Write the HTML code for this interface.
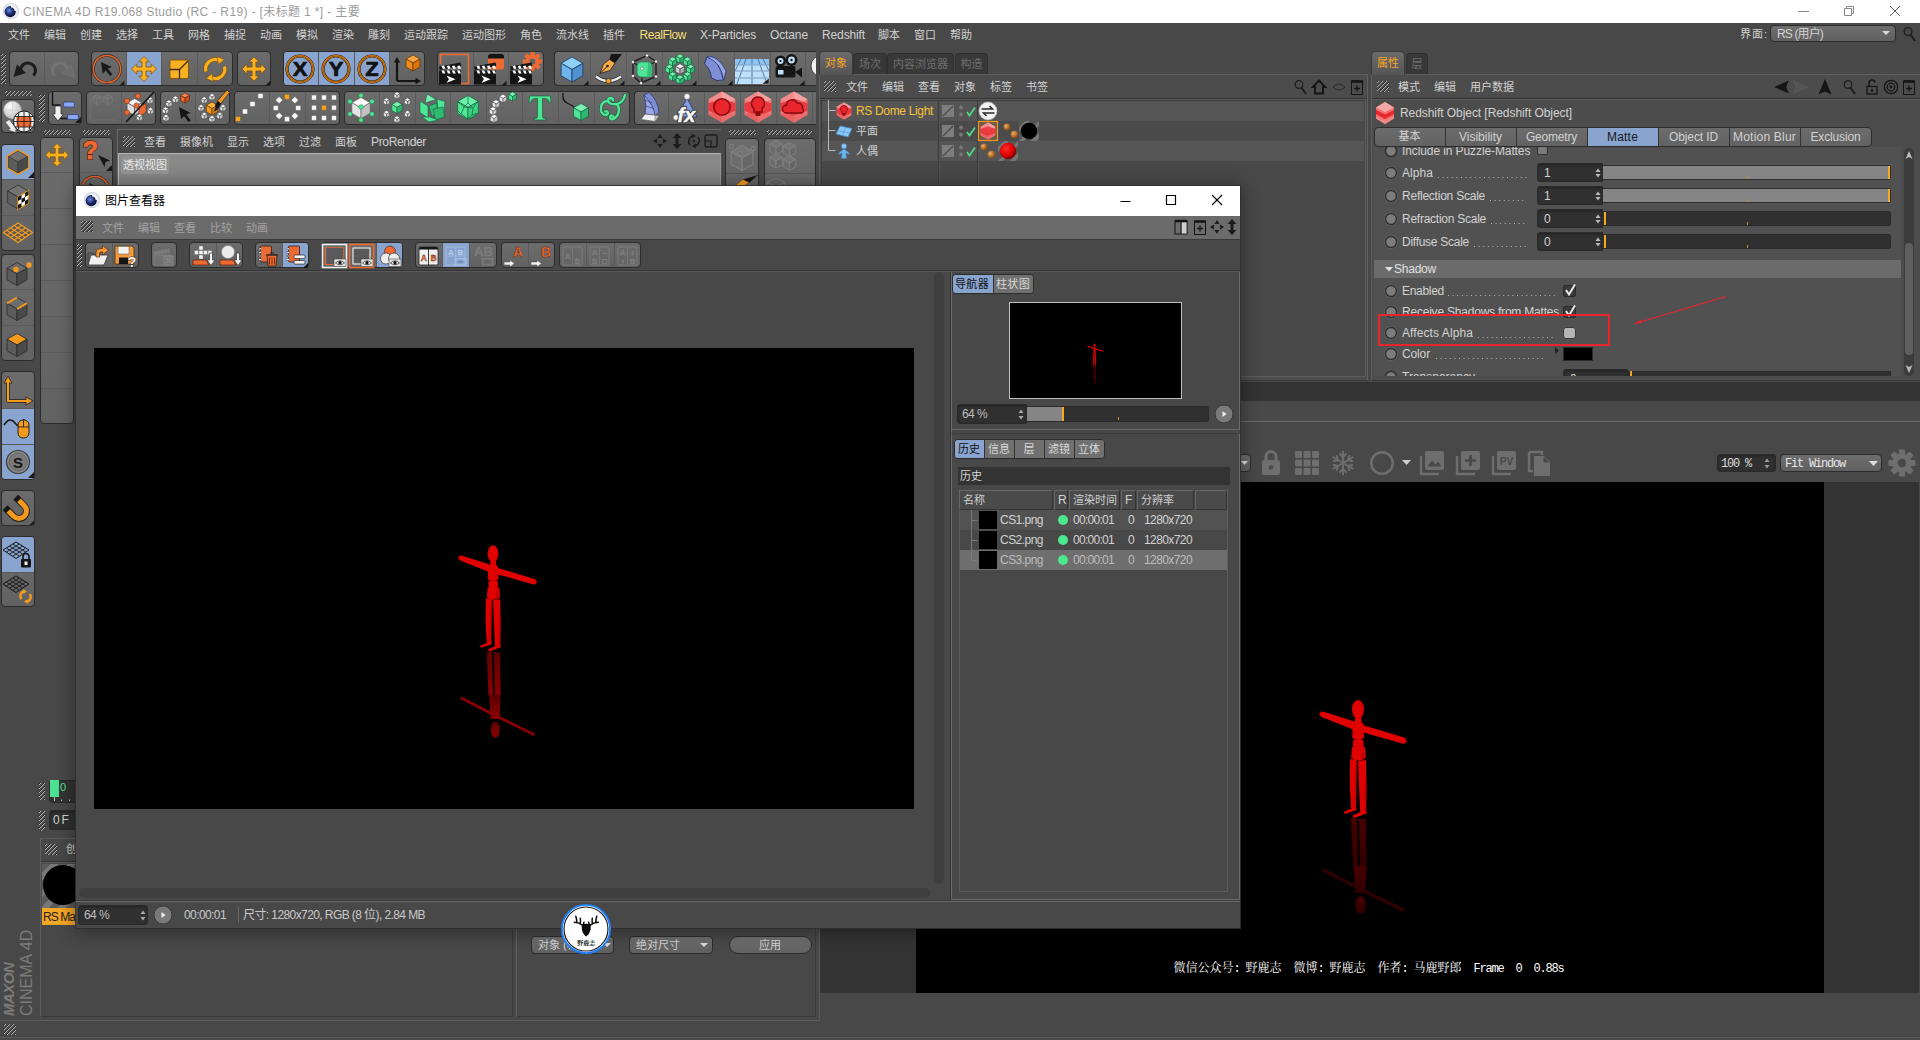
<!DOCTYPE html><html><head><meta charset="utf-8"><title>CINEMA 4D</title><style>
html,body{margin:0;padding:0}
body{width:1920px;height:1040px;overflow:hidden;background:#484848;position:relative;font-family:'Liberation Sans','Noto Sans CJK SC',sans-serif;font-size:12px}
div,span.t,svg{position:absolute;box-sizing:border-box}
span.t{white-space:pre}
svg{overflow:visible}
.grp{border:1px solid #2c2c2c;border-radius:4px;background:linear-gradient(#6c6c6c,#626262);overflow:hidden}
.btn{top:0;height:100%;border-left:1px solid #5a5a5a}
.sel{background:#88a4cf}
.hz{background:repeating-linear-gradient(135deg,#262626 0,#262626 1px,#b4b4b4 1px,#b4b4b4 2px,#505050 2px,#505050 2.83px)}
.fld{background:#303030;border:1px solid #2a2a2a;border-radius:3px;box-shadow:inset 0 1px 2px #222}
.dd{background:linear-gradient(#6e6e6e,#606060);border:1px solid #2c2c2c;border-radius:4px}
</style></head><body><div style="left:0px;top:0px;width:1920px;height:23px;background:#fff"></div>
<svg style="left:2px;top:2px;" width="18" height="18" viewBox="0 0 18 18"><defs><radialGradient id="lg" cx="40%" cy="40%" r="60%"><stop offset="0" stop-color="#6a8be0"/><stop offset="0.6" stop-color="#1b2a6b"/><stop offset="1" stop-color="#0a1030"/></radialGradient></defs><circle cx="9" cy="9" r="8" fill="#c9ccd6"/><circle cx="9" cy="9" r="7.3" fill="#e9ebf2"/><circle cx="8.2" cy="9.6" r="5.6" fill="url(#lg)"/><path d="M9 3.5a5.5 5.5 0 0 1 5.5 5.5l-2-.3a3.6 3.6 0 0 0-3.5-3.3z" fill="#f5f6fa"/></svg>
<span class="t" style="top:4.0px;font-size:12px;line-height:16px;color:#9b9b9b;left:23px;letter-spacing:0.364px;">CINEMA 4D R19.068 Studio (RC - R19) - [未标题 1 *] - 主要</span>
<svg style="left:1780px;top:0px;" width="140" height="23" viewBox="0 0 140 23"><path d="M18 11.5h11" stroke="#8a8a8a" stroke-width="1" fill="none"/><path d="M64.5 8.5h7v7h-7z M66.5 8.5v-2h7v7h-2" stroke="#8a8a8a" stroke-width="1" fill="none"/><path d="M110 6l10 10M120 6l-10 10" stroke="#666" stroke-width="1" fill="none"/></svg>
<span class="t" style="top:27.5px;font-size:11px;line-height:15px;color:#d2d2d2;left:8px;letter-spacing:0.000px;">文件</span>
<span class="t" style="top:27.5px;font-size:11px;line-height:15px;color:#d2d2d2;left:44px;letter-spacing:0.000px;">编辑</span>
<span class="t" style="top:27.5px;font-size:11px;line-height:15px;color:#d2d2d2;left:80px;letter-spacing:0.000px;">创建</span>
<span class="t" style="top:27.5px;font-size:11px;line-height:15px;color:#d2d2d2;left:116px;letter-spacing:0.000px;">选择</span>
<span class="t" style="top:27.5px;font-size:11px;line-height:15px;color:#d2d2d2;left:152px;letter-spacing:0.000px;">工具</span>
<span class="t" style="top:27.5px;font-size:11px;line-height:15px;color:#d2d2d2;left:188px;letter-spacing:0.000px;">网格</span>
<span class="t" style="top:27.5px;font-size:11px;line-height:15px;color:#d2d2d2;left:224px;letter-spacing:0.000px;">捕捉</span>
<span class="t" style="top:27.5px;font-size:11px;line-height:15px;color:#d2d2d2;left:260px;letter-spacing:0.000px;">动画</span>
<span class="t" style="top:27.5px;font-size:11px;line-height:15px;color:#d2d2d2;left:296px;letter-spacing:0.000px;">模拟</span>
<span class="t" style="top:27.5px;font-size:11px;line-height:15px;color:#d2d2d2;left:332px;letter-spacing:0.000px;">渲染</span>
<span class="t" style="top:27.5px;font-size:11px;line-height:15px;color:#d2d2d2;left:368px;letter-spacing:0.000px;">雕刻</span>
<span class="t" style="top:27.5px;font-size:11px;line-height:15px;color:#d2d2d2;left:404px;letter-spacing:0.000px;">运动跟踪</span>
<span class="t" style="top:27.5px;font-size:11px;line-height:15px;color:#d2d2d2;left:462px;letter-spacing:0.000px;">运动图形</span>
<span class="t" style="top:27.5px;font-size:11px;line-height:15px;color:#d2d2d2;left:520px;letter-spacing:0.000px;">角色</span>
<span class="t" style="top:27.5px;font-size:11px;line-height:15px;color:#d2d2d2;left:556px;letter-spacing:0.000px;">流水线</span>
<span class="t" style="top:27.5px;font-size:11px;line-height:15px;color:#d2d2d2;left:603px;letter-spacing:0.000px;">插件</span>
<span class="t" style="top:27.0px;font-size:12px;line-height:16px;color:#f3df7c;left:639.5px;letter-spacing:-0.439px;">RealFlow</span>
<span class="t" style="top:27.0px;font-size:12px;line-height:16px;color:#d2d2d2;left:700px;letter-spacing:-0.183px;">X-Particles</span>
<span class="t" style="top:27.0px;font-size:12px;line-height:16px;color:#d2d2d2;left:770px;letter-spacing:-0.117px;">Octane</span>
<span class="t" style="top:27.0px;font-size:12px;line-height:16px;color:#d2d2d2;left:822px;letter-spacing:-0.129px;">Redshift</span>
<span class="t" style="top:27.5px;font-size:11px;line-height:15px;color:#d2d2d2;left:878px;letter-spacing:0.000px;">脚本</span>
<span class="t" style="top:27.5px;font-size:11px;line-height:15px;color:#d2d2d2;left:914px;letter-spacing:0.000px;">窗口</span>
<span class="t" style="top:27.5px;font-size:11px;line-height:15px;color:#d2d2d2;left:950px;letter-spacing:0.000px;">帮助</span>
<span class="t" style="top:26.5px;font-size:11px;line-height:15px;color:#d2d2d2;left:1740px;letter-spacing:0.979px;">界面:</span>
<div class="dd" style="left:1770px;top:25px;width:126px;height:17px;"></div>
<span class="t" style="top:25.5px;font-size:12px;line-height:16px;color:#d2d2d2;left:1777px;letter-spacing:-0.857px;">RS (用户)</span>
<svg style="left:1882px;top:31px;" width="9" height="5" viewBox="0 0 9 5"><path d="M0 0h8l-4 4z" fill="#d8d8d8"/></svg>
<svg style="left:1903px;top:26px;" width="14" height="16" viewBox="0 0 14 16"><circle cx="5" cy="5.5" r="3.8" fill="none" stroke="#1e1e1e" stroke-width="1.3"/><path d="M7.5 8.5L12 15" stroke="#1e1e1e" stroke-width="2"/></svg>
<div class="hz" style="left:1px;top:54px;width:5px;height:30px;"></div>
<div class="grp" style="left:9px;top:51px;width:70px;height:35px;"><div class="btn" style="left:-1px;width:35px;border-left:none;"></div><div class="btn" style="left:34px;width:35px;"></div></div>
<svg style="left:8px;top:51px;" width="36" height="36" viewBox="0 0 36 36"><path d="M25.5 24.5A7.5 7.5 0 1 0 12.5 20.5" stroke="#1c1c1c" stroke-width="3" fill="none"/><path d="M5.5 26l3.5-12.5 9 8.5z" fill="#1c1c1c"/></svg>
<svg style="left:44px;top:51px;" width="36" height="36" viewBox="0 0 36 36"><path d="M10.5 24.5A7.5 7.5 0 1 1 23.5 20.5" stroke="#747474" stroke-width="3" fill="none"/><path d="M30.5 26l-3.5-12.5-9 8.5z" fill="#6c6c6c" stroke="#777" stroke-width="0.6"/></svg>
<div class="grp" style="left:91px;top:51px;width:142px;height:35px;"><div class="btn" style="left:-1px;width:35px;border-left:none;"></div><div class="btn sel" style="left:34px;width:35px;"></div><div class="btn" style="left:69px;width:36px;"></div><div class="btn" style="left:105px;width:36px;"></div></div>
<svg style="left:90px;top:51px;" width="36" height="36" viewBox="0 0 36 36"><circle cx="17" cy="18" r="13.6" fill="none" stroke="#2a2a2a" stroke-width="2.6"/><circle cx="17" cy="18" r="13.6" fill="none" stroke="#e8622a" stroke-width="1.5"/><path d="M11 11l11 5-4.2 1.6 4.6 5.8-2.2 1.7-4.6-5.8-2.8 3.6z" fill="#1a1a1a"/><path d="M34.5 29.5v5h-5z" fill="#1a1a1a"/></svg>
<svg style="left:126px;top:51px;" width="36" height="36" viewBox="0 0 36 36"><path d="M18.0 5.5L23.2 10.8L20.0 10.8L20.0 16.0L25.2 16.0L25.2 12.8L30.5 18.0L25.2 23.2L25.2 20.0L20.0 20.0L20.0 25.2L23.2 25.2L18.0 30.5L12.8 25.2L16.0 25.2L16.0 20.0L10.8 20.0L10.8 23.2L5.5 18.0L10.8 12.8L10.8 16.0L16.0 16.0L16.0 10.8L12.8 10.8z" fill="#f9b021" stroke="#7a4a00" stroke-width="0.7" stroke-linejoin="round"/></svg>
<svg style="left:161px;top:51px;" width="36" height="36" viewBox="0 0 36 36"><rect x="9" y="9" width="18.5" height="18.5" rx="1.5" fill="#f9b021" stroke="#7a4a00" stroke-width="0.8"/><path d="M9 18.5h9.5v9M18.5 18.5L27 10" stroke="#3a2a00" stroke-width="1.3" fill="none"/></svg>
<svg style="left:197px;top:51px;" width="36" height="36" viewBox="0 0 36 36"><path d="M9 20.5A9.5 9.5 0 0 1 22 9.3" stroke="#7a4a00" stroke-width="4.4" fill="none"/><path d="M9 20.5A9.5 9.5 0 0 1 22 9.3" stroke="#f9b021" stroke-width="3.2" fill="none"/><path d="M27.5 15.5A9.5 9.5 0 0 1 14.5 26.7" stroke="#7a4a00" stroke-width="4.4" fill="none"/><path d="M27.5 15.5A9.5 9.5 0 0 1 14.5 26.7" stroke="#f9b021" stroke-width="3.2" fill="none"/><path d="M20 5.5l7.5 3-6 5z" fill="#f9b021" stroke="#7a4a00" stroke-width="0.6"/><path d="M16.5 30.5l-7.5-3 6-5z" fill="#f9b021" stroke="#7a4a00" stroke-width="0.6"/></svg>
<div class="grp" style="left:237px;top:51px;width:34px;height:35px;"><div class="btn" style="left:-1px;width:34px;border-left:none;"></div></div>
<svg style="left:236px;top:51px;" width="36" height="36" viewBox="0 0 36 36"><path d="M18.0 6.0L23.0 11.0L19.9 11.0L19.9 16.1L25.0 16.1L25.0 13.0L30.0 18.0L25.0 23.0L25.0 19.9L19.9 19.9L19.9 25.0L23.0 25.0L18.0 30.0L13.0 25.0L16.1 25.0L16.1 19.9L11.0 19.9L11.0 23.0L6.0 18.0L11.0 13.0L11.0 16.1L16.1 16.1L16.1 11.0L13.0 11.0z" fill="#f9b021" stroke="#7a4a00" stroke-width="0.7" stroke-linejoin="round"/><path d="M34.5 29.5v5h-5z" fill="#1a1a1a"/></svg>
<div class="grp" style="left:283px;top:51px;width:142px;height:35px;"><div class="btn sel" style="left:-1px;width:35px;border-left:none;"></div><div class="btn sel" style="left:34px;width:36px;"></div><div class="btn sel" style="left:70px;width:35px;"></div><div class="btn" style="left:105px;width:36px;"></div></div>
<svg style="left:282px;top:51px;" width="36" height="36" viewBox="0 0 36 36"><circle cx="18" cy="18" r="13" fill="none" stroke="#2a2010" stroke-width="3.2"/><circle cx="18" cy="18" r="13" fill="none" stroke="#e8820f" stroke-width="2"/><circle cx="18" cy="18" r="13" fill="none" stroke="#4a3010" stroke-width="0.5"/><text x="16.4" y="25.4" font-family="Liberation Sans,sans-serif" font-size="20" font-weight="bold" fill="#111" stroke="#111" stroke-width="0.7" text-anchor="middle" transform="translate(0 0) scale(1.100 1)">X</text></svg>
<svg style="left:318px;top:51px;" width="36" height="36" viewBox="0 0 36 36"><circle cx="18" cy="18" r="13" fill="none" stroke="#2a2010" stroke-width="3.2"/><circle cx="18" cy="18" r="13" fill="none" stroke="#e8820f" stroke-width="2"/><circle cx="18" cy="18" r="13" fill="none" stroke="#4a3010" stroke-width="0.5"/><text x="16.4" y="25.4" font-family="Liberation Sans,sans-serif" font-size="20" font-weight="bold" fill="#111" stroke="#111" stroke-width="0.7" text-anchor="middle" transform="translate(0 0) scale(1.100 1)">Y</text></svg>
<svg style="left:354px;top:51px;" width="36" height="36" viewBox="0 0 36 36"><circle cx="18" cy="18" r="13" fill="none" stroke="#2a2010" stroke-width="3.2"/><circle cx="18" cy="18" r="13" fill="none" stroke="#e8820f" stroke-width="2"/><circle cx="18" cy="18" r="13" fill="none" stroke="#4a3010" stroke-width="0.5"/><text x="16.4" y="25.4" font-family="Liberation Sans,sans-serif" font-size="20" font-weight="bold" fill="#111" stroke="#111" stroke-width="0.7" text-anchor="middle" transform="translate(0 0) scale(1.100 1)">Z</text></svg>
<svg style="left:389px;top:51px;" width="36" height="36" viewBox="0 0 36 36"><path d="M8 30V10M8 30h20" stroke="#151515" stroke-width="2.2" fill="none"/><path d="M8 6l-3.2 5.5h6.4zM32 30l-5.5-3.2v6.4z" fill="#151515"/><path d="M24 4L31.0 8.0L24 12L17.0 8.0z" fill="#f7a540" stroke="#5a3000" stroke-width="0.7" stroke-linejoin="round"/><path d="M17.0 8.0L24 12L24 20L17.0 16.0z" fill="#f08a1c" stroke="#5a3000" stroke-width="0.7" stroke-linejoin="round"/><path d="M31.0 8.0L24 12L24 20L31.0 16.0z" fill="#d9760f" stroke="#5a3000" stroke-width="0.7" stroke-linejoin="round"/></svg>
<div class="grp" style="left:437px;top:51px;width:107px;height:35px;"><div class="btn" style="left:-1px;width:36px;border-left:none;"></div><div class="btn" style="left:35px;width:35px;"></div><div class="btn" style="left:70px;width:36px;"></div></div>
<svg style="left:437px;top:51px;" width="36" height="36" viewBox="0 0 36 36"><path d="M3.5 13V3.5h28v29h-8" stroke="#ee6a33" stroke-width="1.6" fill="none"/><g transform="translate(2,9)"><rect x="0" y="11" width="22" height="13.5" fill="#151515"/><path d="M0 6.5l21.5-4 .8 3.6L.8 10z" fill="#151515"/><path d="M0 10.5h22v3H0z" fill="#151515"/><path d="M2.5 6.1l2.6-.5 1.4 3-2.6.5z" fill="#fff"/><path d="M2.5 10.6h2.6l1.2 2.8h-2.6z" fill="#fff"/><path d="M7.7 6.1l2.6-.5 1.4 3-2.6.5z" fill="#fff"/><path d="M7.7 10.6h2.6l1.2 2.8h-2.6z" fill="#fff"/><path d="M12.9 6.1l2.6-.5 1.4 3-2.6.5z" fill="#fff"/><path d="M12.9 10.6h2.6l1.2 2.8h-2.6z" fill="#fff"/><path d="M18.1 6.1l2.6-.5 1.4 3-2.6.5z" fill="#fff"/><path d="M18.1 10.6h2.6l1.2 2.8h-2.6z" fill="#fff"/><path d="M7.5 15.5l9 3.8-9 3.8 2.4-3.8z" fill="#fff"/></g></svg>
<svg style="left:472px;top:51px;" width="36" height="36" viewBox="0 0 36 36"><rect x="16" y="3" width="16" height="15.5" rx="2.5" fill="#ee6a33"/><path d="M16 7.5V5.5a2.5 2.5 0 0 1 2.5-2.5h11a2.5 2.5 0 0 1 2.5 2.5v2z" fill="#151515"/><g transform="translate(2,9)"><rect x="0" y="11" width="22" height="13.5" fill="#151515"/><path d="M0 6.5l21.5-4 .8 3.6L.8 10z" fill="#151515"/><path d="M0 10.5h22v3H0z" fill="#151515"/><path d="M2.5 6.1l2.6-.5 1.4 3-2.6.5z" fill="#fff"/><path d="M2.5 10.6h2.6l1.2 2.8h-2.6z" fill="#fff"/><path d="M7.7 6.1l2.6-.5 1.4 3-2.6.5z" fill="#fff"/><path d="M7.7 10.6h2.6l1.2 2.8h-2.6z" fill="#fff"/><path d="M12.9 6.1l2.6-.5 1.4 3-2.6.5z" fill="#fff"/><path d="M12.9 10.6h2.6l1.2 2.8h-2.6z" fill="#fff"/><path d="M18.1 6.1l2.6-.5 1.4 3-2.6.5z" fill="#fff"/><path d="M18.1 10.6h2.6l1.2 2.8h-2.6z" fill="#fff"/><path d="M7.5 15.5l9 3.8-9 3.8 2.4-3.8z" fill="#fff"/></g><path d="M34.5 29.5v5h-5z" fill="#1a1a1a"/></svg>
<svg style="left:508px;top:51px;" width="36" height="36" viewBox="0 0 36 36"><g transform="translate(24.5,10.5)"><rect x="-2.1" y="-9.6" width="4.2" height="5" fill="#ee6a33" transform="rotate(0)"/><rect x="-2.1" y="-9.6" width="4.2" height="5" fill="#ee6a33" transform="rotate(45)"/><rect x="-2.1" y="-9.6" width="4.2" height="5" fill="#ee6a33" transform="rotate(90)"/><rect x="-2.1" y="-9.6" width="4.2" height="5" fill="#ee6a33" transform="rotate(135)"/><rect x="-2.1" y="-9.6" width="4.2" height="5" fill="#ee6a33" transform="rotate(180)"/><rect x="-2.1" y="-9.6" width="4.2" height="5" fill="#ee6a33" transform="rotate(225)"/><rect x="-2.1" y="-9.6" width="4.2" height="5" fill="#ee6a33" transform="rotate(270)"/><rect x="-2.1" y="-9.6" width="4.2" height="5" fill="#ee6a33" transform="rotate(315)"/><circle r="6.8" fill="#ee6a33"/><circle r="2.9" fill="#636363"/></g><g transform="translate(2,9)"><rect x="0" y="11" width="22" height="13.5" fill="#151515"/><path d="M0 6.5l21.5-4 .8 3.6L.8 10z" fill="#151515"/><path d="M0 10.5h22v3H0z" fill="#151515"/><path d="M2.5 6.1l2.6-.5 1.4 3-2.6.5z" fill="#fff"/><path d="M2.5 10.6h2.6l1.2 2.8h-2.6z" fill="#fff"/><path d="M7.7 6.1l2.6-.5 1.4 3-2.6.5z" fill="#fff"/><path d="M7.7 10.6h2.6l1.2 2.8h-2.6z" fill="#fff"/><path d="M12.9 6.1l2.6-.5 1.4 3-2.6.5z" fill="#fff"/><path d="M12.9 10.6h2.6l1.2 2.8h-2.6z" fill="#fff"/><path d="M18.1 6.1l2.6-.5 1.4 3-2.6.5z" fill="#fff"/><path d="M18.1 10.6h2.6l1.2 2.8h-2.6z" fill="#fff"/><path d="M7.5 15.5l9 3.8-9 3.8 2.4-3.8z" fill="#fff"/></g></svg>
<div class="grp" style="left:554px;top:51px;width:262px;height:35px;border-top-right-radius:0;border-bottom-right-radius:0;border-right:none;"><div class="btn" style="left:-1px;width:36px;border-left:none;"></div><div class="btn" style="left:35px;width:36px;"></div><div class="btn" style="left:71px;width:36px;"></div><div class="btn" style="left:107px;width:36px;"></div><div class="btn" style="left:143px;width:36px;"></div><div class="btn" style="left:179px;width:36px;"></div><div class="btn" style="left:215px;width:35px;"></div><div class="btn" style="left:250px;width:36px;"></div></div>
<svg style="left:554px;top:51px;" width="36" height="36" viewBox="0 0 36 36"><path d="M18 6.0L28.9 12.25L18 18.5L7.1 12.25z" fill="#8fd0f8" stroke="#1e3a5a" stroke-width="0.8" stroke-linejoin="round"/><path d="M7.1 12.25L18 18.5L18 31.0L7.1 24.75z" fill="#6cb4ea" stroke="#1e3a5a" stroke-width="0.8" stroke-linejoin="round"/><path d="M28.9 12.25L18 18.5L18 31.0L28.9 24.75z" fill="#4f92cf" stroke="#1e3a5a" stroke-width="0.8" stroke-linejoin="round"/><path d="M34.5 29.5v5h-5z" fill="#1a1a1a"/></svg>
<svg style="left:590px;top:51px;" width="36" height="36" viewBox="0 0 36 36"><path d="M6 25.5q12 9 25 0" stroke="#222" stroke-width="3.6" fill="none"/><path d="M6 25.5q12 9 25 0" stroke="#eee" stroke-width="2.2" fill="none"/><circle cx="18.5" cy="30" r="2.6" fill="#f9a31a" stroke="#222" stroke-width="0.7"/><path d="M21 3h11l-7 9-5.5-3.5z" fill="#151515"/><path d="M19.5 8.5l5.5 3.5-5 7.5-10 3 3.5-9.5z" fill="#f9a945" stroke="#222" stroke-width="0.8"/><path d="M10 22.5l7-7" stroke="#222" stroke-width="1"/><circle cx="17.5" cy="15" r="1.3" fill="#222"/><path d="M34.5 29.5v5h-5z" fill="#1a1a1a"/></svg>
<svg style="left:626px;top:51px;" width="36" height="36" viewBox="0 0 36 36"><path d="M7 11l14-6.5 9 6v15l-15 6.5-8-7z" fill="none" stroke="#1e1e1e" stroke-width="1.4"/><path d="M7 11l9 6.5 14-7M16 17.5V32" fill="none" stroke="#1e1e1e" stroke-width="1.2"/><rect x="11" y="11" width="15" height="15" rx="4.5" fill="#4fe596" stroke="#1e8a52" stroke-width="0.8"/><path d="M22 11.5q4 1 3.8 14-3 .8-4.8.3z" fill="#35c07a"/><circle cx="7" cy="11" r="1.5" fill="#fff" stroke="#333" stroke-width="0.4"/><circle cx="21" cy="4.5" r="1.5" fill="#fff" stroke="#333" stroke-width="0.4"/><circle cx="30" cy="10.5" r="1.5" fill="#fff" stroke="#333" stroke-width="0.4"/><circle cx="30" cy="25.5" r="1.5" fill="#fff" stroke="#333" stroke-width="0.4"/><circle cx="15" cy="32" r="1.5" fill="#fff" stroke="#333" stroke-width="0.4"/><circle cx="7" cy="25" r="1.5" fill="#fff" stroke="#333" stroke-width="0.4"/><circle cx="16" cy="17.5" r="1.5" fill="#fff" stroke="#333" stroke-width="0.4"/><path d="M34.5 29.5v5h-5z" fill="#1a1a1a"/></svg>
<svg style="left:662px;top:51px;" width="36" height="36" viewBox="0 0 36 36"><path d="M18.0 2.9000000000000004L22.0 5.2L18.0 7.5L14.0 5.2z" fill="#7af0b2" stroke="#14603a" stroke-width="0.6" stroke-linejoin="round"/><path d="M14.0 5.2L18.0 7.5L18.0 12.1L14.0 9.8z" fill="#4fe596" stroke="#14603a" stroke-width="0.6" stroke-linejoin="round"/><path d="M22.0 5.2L18.0 7.5L18.0 12.1L22.0 9.8z" fill="#2fb870" stroke="#14603a" stroke-width="0.6" stroke-linejoin="round"/><path d="M25.4 6.0L29.4 8.3L25.4 10.6L21.4 8.3z" fill="#7af0b2" stroke="#14603a" stroke-width="0.6" stroke-linejoin="round"/><path d="M21.4 8.3L25.4 10.6L25.4 15.2L21.4 12.899999999999999z" fill="#4fe596" stroke="#14603a" stroke-width="0.6" stroke-linejoin="round"/><path d="M29.4 8.3L25.4 10.6L25.4 15.2L29.4 12.899999999999999z" fill="#2fb870" stroke="#14603a" stroke-width="0.6" stroke-linejoin="round"/><path d="M28.5 13.4L32.5 15.7L28.5 18.0L24.5 15.7z" fill="#7af0b2" stroke="#14603a" stroke-width="0.6" stroke-linejoin="round"/><path d="M24.5 15.7L28.5 18.0L28.5 22.6L24.5 20.3z" fill="#4fe596" stroke="#14603a" stroke-width="0.6" stroke-linejoin="round"/><path d="M32.5 15.7L28.5 18.0L28.5 22.6L32.5 20.3z" fill="#2fb870" stroke="#14603a" stroke-width="0.6" stroke-linejoin="round"/><path d="M25.4 20.799999999999997L29.4 23.099999999999998L25.4 25.4L21.4 23.099999999999998z" fill="#7af0b2" stroke="#14603a" stroke-width="0.6" stroke-linejoin="round"/><path d="M21.4 23.099999999999998L25.4 25.4L25.4 30.0L21.4 27.7z" fill="#4fe596" stroke="#14603a" stroke-width="0.6" stroke-linejoin="round"/><path d="M29.4 23.099999999999998L25.4 25.4L25.4 30.0L29.4 27.7z" fill="#2fb870" stroke="#14603a" stroke-width="0.6" stroke-linejoin="round"/><path d="M18.0 23.9L22.0 26.2L18.0 28.5L14.0 26.2z" fill="#7af0b2" stroke="#14603a" stroke-width="0.6" stroke-linejoin="round"/><path d="M14.0 26.2L18.0 28.5L18.0 33.1L14.0 30.8z" fill="#4fe596" stroke="#14603a" stroke-width="0.6" stroke-linejoin="round"/><path d="M22.0 26.2L18.0 28.5L18.0 33.1L22.0 30.8z" fill="#2fb870" stroke="#14603a" stroke-width="0.6" stroke-linejoin="round"/><path d="M10.6 20.799999999999997L14.6 23.099999999999998L10.6 25.4L6.6 23.099999999999998z" fill="#7af0b2" stroke="#14603a" stroke-width="0.6" stroke-linejoin="round"/><path d="M6.6 23.099999999999998L10.6 25.4L10.6 30.0L6.6 27.7z" fill="#4fe596" stroke="#14603a" stroke-width="0.6" stroke-linejoin="round"/><path d="M14.6 23.099999999999998L10.6 25.4L10.6 30.0L14.6 27.7z" fill="#2fb870" stroke="#14603a" stroke-width="0.6" stroke-linejoin="round"/><path d="M7.5 13.4L11.5 15.7L7.5 18.0L3.5 15.7z" fill="#7af0b2" stroke="#14603a" stroke-width="0.6" stroke-linejoin="round"/><path d="M3.5 15.7L7.5 18.0L7.5 22.6L3.5 20.3z" fill="#4fe596" stroke="#14603a" stroke-width="0.6" stroke-linejoin="round"/><path d="M11.5 15.7L7.5 18.0L7.5 22.6L11.5 20.3z" fill="#2fb870" stroke="#14603a" stroke-width="0.6" stroke-linejoin="round"/><path d="M10.6 6.0L14.6 8.3L10.6 10.6L6.6 8.3z" fill="#7af0b2" stroke="#14603a" stroke-width="0.6" stroke-linejoin="round"/><path d="M6.6 8.3L10.6 10.6L10.6 15.2L6.6 12.899999999999999z" fill="#4fe596" stroke="#14603a" stroke-width="0.6" stroke-linejoin="round"/><path d="M14.6 8.3L10.6 10.6L10.6 15.2L14.6 12.899999999999999z" fill="#2fb870" stroke="#14603a" stroke-width="0.6" stroke-linejoin="round"/><path d="M18 12.8L22.5 15.4L18 18L13.5 15.4z" fill="#f4f4f4" stroke="#444" stroke-width="0.6" stroke-linejoin="round"/><path d="M13.5 15.4L18 18L18 23.2L13.5 20.6z" fill="#d0d0d0" stroke="#444" stroke-width="0.6" stroke-linejoin="round"/><path d="M22.5 15.4L18 18L18 23.2L22.5 20.6z" fill="#a8a8a8" stroke="#444" stroke-width="0.6" stroke-linejoin="round"/><path d="M34.5 29.5v5h-5z" fill="#1a1a1a"/></svg>
<svg style="left:698px;top:51px;" width="36" height="36" viewBox="0 0 36 36"><path d="M9 6q10-3 19 14l-2.5 9q-7 2-12-2-1-9-7-14z" fill="#7f8fd6" stroke="#2a3270" stroke-width="0.9"/><path d="M9 6q12 2 16.5 23" stroke="#2a3270" stroke-width="0.9" fill="none"/><path d="M9 6q10-3 19 14l-2.500 9Q24 12 9 6z" fill="#9aa8e6" stroke="#2a3270" stroke-width="0.6"/><path d="M34.5 29.5v5h-5z" fill="#1a1a1a"/></svg>
<svg style="left:734px;top:51px;" width="36" height="36" viewBox="0 0 36 36"><path d="M1 8h34v25H1z" fill="#bfe0fa"/><path d="M1 8h34v6H1z" fill="#8fc3ee"/><path d="M1 14h34M1 20h34M1 27h34M18 8v25M12 8L3 33M24 8l9 25M7 8L1 20M29 8l6 12" stroke="#4a78a8" stroke-width="1" fill="none"/><path d="M1 14h34M1 20h34M1 27h34" stroke="#eaf5ff" stroke-width="0.5"/><path d="M35 27v6h-7z" fill="#1a1a1a" stroke="#ddd" stroke-width="0.5"/></svg>
<svg style="left:770px;top:51px;" width="36" height="36" viewBox="0 0 36 36"><circle cx="10.5" cy="10" r="5.5" fill="#151515"/><circle cx="21.5" cy="9" r="6" fill="#151515"/><circle cx="10.5" cy="10" r="3" fill="#bfe0fa"/><circle cx="21.5" cy="9" r="3.4" fill="#bfe0fa"/><circle cx="10.5" cy="10" r="1.1" fill="#151515"/><circle cx="21.5" cy="9" r="1.2" fill="#151515"/><rect x="5.5" y="15" width="20" height="11.5" rx="2" fill="#151515"/><path d="M25 21l7-4.5v10z" fill="#151515"/><rect x="8" y="19" width="5.500" height="4.5" fill="#bfe0fa"/><path d="M34.5 29.5v5h-5z" fill="#1a1a1a"/></svg>
<svg style="left:805px;top:51px;clip-path:inset(0 25px 0 0);" width="36" height="36" viewBox="0 0 36 36"><circle cx="17" cy="15" r="11" fill="#f2f2f2" stroke="#222" stroke-width="0.8"/></svg>
<div class="hz" style="left:5px;top:91px;width:27px;height:5px;"></div>
<div class="grp" style="left:1px;top:99px;width:34px;height:34px;"><div class="btn" style="left:-1px;width:34px;border-left:none;"></div></div>
<svg style="left:1px;top:100px;" width="34" height="34" viewBox="0 0 34 34"><defs><radialGradient id="gw" cx="35%" cy="30%" r="70%"><stop offset="0" stop-color="#fff"/><stop offset="1" stop-color="#bdbdbd"/></radialGradient></defs><circle cx="11.5" cy="10" r="9" fill="url(#gw)" stroke="#888" stroke-width="0.5"/><path d="M11.5 1v18M2.5 10h18" stroke="#d0d0d0" stroke-width="0.7"/><path d="M4 22l4.5-2.5 4.5 6 2.5-1.5-.8 8.500-8-2.500 2.500-1.500z" fill="#ececec" stroke="#444" stroke-width="0.7"/><circle cx="23" cy="21.5" r="10.5" fill="#f1f1f1" stroke="#222" stroke-width="1"/><path d="M15.5 16.500h15v10.500h-15z" fill="#ee6a33"/><path d="M12.500 21.500h21M13.5 16.500h19M13.5 27h19M23 11v21M18 12.500q-3 9 0 18M28 12.500q3 9 0 18" stroke="#222" stroke-width="0.9" fill="none"/></svg>
<div class="hz" style="left:39px;top:95px;width:6px;height:27px;"></div>
<div class="grp" style="left:48px;top:91px;width:34px;height:34px;"><div class="btn" style="left:-1px;width:34px;border-left:none;"></div></div>
<svg style="left:48px;top:90px;" width="34" height="34" viewBox="0 0 34 34"><path d="M4.500 2v13h8M10 15v13.500h11" stroke="#151515" stroke-width="1.4" fill="none"/><path d="M7 16h6v8h2.500l-5.500 7-5.500-7h2.500z" fill="#f0f0f0" stroke="#333" stroke-width="0.8"/><rect x="15.500" y="12" width="11" height="5" rx="1.500" fill="#8aa6f0" stroke="#2a3a80" stroke-width="0.7"/><rect x="19.500" y="24.500" width="11" height="5" rx="1.500" fill="#8aa6f0" stroke="#2a3a80" stroke-width="0.7"/><path d="M33 27v6h-6z" fill="#1a1a1a"/></svg>
<div class="grp" style="left:86px;top:91px;width:70px;height:34px;"><div class="btn" style="left:-1px;width:35px;border-left:none;"></div><div class="btn" style="left:34px;width:35px;"></div></div>
<svg style="left:86px;top:90px;" width="34" height="34" viewBox="0 0 34 34"><g opacity="0.55"><path d="M11 4.5L15.3 7.0L11 9.5L6.7 7.0z" fill="#7a7a7a" stroke="#8a8a8a" stroke-width="0.7" stroke-linejoin="round"/><path d="M6.7 7.0L11 9.5L11 14.5L6.7 12.0z" fill="#707070" stroke="#8a8a8a" stroke-width="0.7" stroke-linejoin="round"/><path d="M15.3 7.0L11 9.5L11 14.5L15.3 12.0z" fill="#686868" stroke="#8a8a8a" stroke-width="0.7" stroke-linejoin="round"/><path d="M22 4.5L26.4 7.0L22 9.5L17.6 7.0z" fill="#7a7a7a" stroke="#8a8a8a" stroke-width="0.7" stroke-linejoin="round"/><path d="M17.6 7.0L22 9.5L22 14.5L17.6 12.0z" fill="#707070" stroke="#8a8a8a" stroke-width="0.7" stroke-linejoin="round"/><path d="M26.4 7.0L22 9.5L22 14.5L26.4 12.0z" fill="#686868" stroke="#8a8a8a" stroke-width="0.7" stroke-linejoin="round"/><path d="M4.500 5v25h26" stroke="#7e7e7e" stroke-width="1.300" fill="none" stroke-dasharray="1.500 1.200"/></g></svg>
<svg style="left:122px;top:90px;" width="34" height="34" viewBox="0 0 34 34"><path d="M12.5 8.5L19.9 12.75L12.5 17L5.1 12.75z" fill="#f4f4f4" stroke="#555" stroke-width="0.7" stroke-linejoin="round"/><path d="M5.1 12.75L12.5 17L12.5 25.5L5.1 21.25z" fill="#e0e0e0" stroke="#555" stroke-width="0.7" stroke-linejoin="round"/><path d="M19.9 12.75L12.5 17L12.5 25.5L19.9 21.25z" fill="#c8c8c8" stroke="#555" stroke-width="0.7" stroke-linejoin="round"/><path d="M17 17l7-3.500v9l-7 4z" fill="#ee6a33" stroke="#6a2a10" stroke-width="0.6"/><circle cx="5" cy="11" r="2.600" fill="#ee6a33" stroke="#7a2a10" stroke-width="0.500"/><circle cx="16" cy="6" r="2.600" fill="#ee6a33" stroke="#7a2a10" stroke-width="0.500"/><circle cx="5" cy="22.5" r="2.600" fill="#ee6a33" stroke="#7a2a10" stroke-width="0.500"/><circle cx="14.5" cy="15.5" r="2.600" fill="#ee6a33" stroke="#7a2a10" stroke-width="0.500"/><path d="M28 7.1L31.0 8.8L28 10.5L25.0 8.8z" fill="#fff" stroke="#444" stroke-width="0.5" stroke-linejoin="round"/><path d="M25.0 8.8L28 10.5L28 13.9L25.0 12.2z" fill="#e4e4e4" stroke="#444" stroke-width="0.5" stroke-linejoin="round"/><path d="M31.0 8.8L28 10.5L28 13.9L31.0 12.2z" fill="#c4c4c4" stroke="#444" stroke-width="0.5" stroke-linejoin="round"/><path d="M28.5 17.6L31.5 19.3L28.5 21L25.5 19.3z" fill="#fff" stroke="#444" stroke-width="0.5" stroke-linejoin="round"/><path d="M25.5 19.3L28.5 21L28.5 24.4L25.5 22.7z" fill="#e4e4e4" stroke="#444" stroke-width="0.5" stroke-linejoin="round"/><path d="M31.5 19.3L28.5 21L28.5 24.4L31.5 22.7z" fill="#c4c4c4" stroke="#444" stroke-width="0.5" stroke-linejoin="round"/><path d="M17.5 24.1L20.5 25.8L17.5 27.5L14.5 25.8z" fill="#fff" stroke="#444" stroke-width="0.5" stroke-linejoin="round"/><path d="M14.5 25.8L17.5 27.5L17.5 30.9L14.5 29.2z" fill="#e4e4e4" stroke="#444" stroke-width="0.5" stroke-linejoin="round"/><path d="M20.5 25.8L17.5 27.5L17.5 30.9L20.5 29.2z" fill="#c4c4c4" stroke="#444" stroke-width="0.5" stroke-linejoin="round"/><path d="M4 32L32 2" stroke="#151515" stroke-width="1.500"/></svg>
<div class="grp" style="left:160px;top:91px;width:70px;height:34px;"><div class="btn" style="left:-1px;width:35px;border-left:none;"></div><div class="btn" style="left:34px;width:35px;"></div></div>
<svg style="left:160px;top:90px;" width="34" height="34" viewBox="0 0 34 34"><path d="M6 24.4L9.1 26.2L6 28L2.9 26.2z" fill="#fff" stroke="#444" stroke-width="0.5" stroke-linejoin="round"/><path d="M2.9 26.2L6 28L6 31.6L2.9 29.8z" fill="#e8e8e8" stroke="#444" stroke-width="0.5" stroke-linejoin="round"/><path d="M9.1 26.2L6 28L6 31.6L9.1 29.8z" fill="#c8c8c8" stroke="#444" stroke-width="0.5" stroke-linejoin="round"/><path d="M5.5 16.9L8.6 18.7L5.5 20.5L2.4 18.7z" fill="#fff" stroke="#444" stroke-width="0.5" stroke-linejoin="round"/><path d="M2.4 18.7L5.5 20.5L5.5 24.1L2.4 22.3z" fill="#e8e8e8" stroke="#444" stroke-width="0.5" stroke-linejoin="round"/><path d="M8.6 18.7L5.5 20.5L5.5 24.1L8.6 22.3z" fill="#c8c8c8" stroke="#444" stroke-width="0.5" stroke-linejoin="round"/><path d="M9 9.9L12.1 11.7L9 13.5L5.9 11.7z" fill="#fff" stroke="#444" stroke-width="0.5" stroke-linejoin="round"/><path d="M5.9 11.7L9 13.5L9 17.1L5.9 15.3z" fill="#e8e8e8" stroke="#444" stroke-width="0.5" stroke-linejoin="round"/><path d="M12.1 11.7L9 13.5L9 17.1L12.1 15.3z" fill="#c8c8c8" stroke="#444" stroke-width="0.5" stroke-linejoin="round"/><path d="M15.5 5.9L18.6 7.7L15.5 9.5L12.4 7.7z" fill="#fff" stroke="#444" stroke-width="0.5" stroke-linejoin="round"/><path d="M12.4 7.7L15.5 9.5L15.5 13.1L12.4 11.3z" fill="#e8e8e8" stroke="#444" stroke-width="0.5" stroke-linejoin="round"/><path d="M18.6 7.7L15.5 9.5L15.5 13.1L18.6 11.3z" fill="#c8c8c8" stroke="#444" stroke-width="0.5" stroke-linejoin="round"/><path d="M25 3L29.4 5.5L25 8L20.6 5.5z" fill="#f58a55" stroke="#5a2008" stroke-width="0.6" stroke-linejoin="round"/><path d="M20.6 5.5L25 8L25 13L20.6 10.5z" fill="#ee6a33" stroke="#5a2008" stroke-width="0.6" stroke-linejoin="round"/><path d="M29.4 5.5L25 8L25 13L29.4 10.5z" fill="#c9521f" stroke="#5a2008" stroke-width="0.6" stroke-linejoin="round"/><path d="M19 17l11.500 6-4.200 1.300 4.500 6.200-2.300 1.600-4.500-6.200-2.800 3.400z" fill="#151515"/></svg>
<svg style="left:196px;top:90px;" width="34" height="34" viewBox="0 0 34 34"><path d="M16.0 3.5L19.0 5.25L16.0 7.0L13.0 5.25z" fill="#fff" stroke="#444" stroke-width="0.5" stroke-linejoin="round"/><path d="M13.0 5.25L16.0 7.0L16.0 10.5L13.0 8.75z" fill="#e8e8e8" stroke="#444" stroke-width="0.5" stroke-linejoin="round"/><path d="M19.0 5.25L16.0 7.0L16.0 10.5L19.0 8.75z" fill="#c8c8c8" stroke="#444" stroke-width="0.5" stroke-linejoin="round"/><path d="M27.0 14.5L30.0 16.25L27.0 18.0L24.0 16.25z" fill="#fff" stroke="#444" stroke-width="0.5" stroke-linejoin="round"/><path d="M24.0 16.25L27.0 18.0L27.0 21.5L24.0 19.75z" fill="#e8e8e8" stroke="#444" stroke-width="0.5" stroke-linejoin="round"/><path d="M30.0 16.25L27.0 18.0L27.0 21.5L30.0 19.75z" fill="#c8c8c8" stroke="#444" stroke-width="0.5" stroke-linejoin="round"/><path d="M23.8 22.3L26.8 24.05L23.8 25.8L20.8 24.05z" fill="#fff" stroke="#444" stroke-width="0.5" stroke-linejoin="round"/><path d="M20.8 24.05L23.8 25.8L23.8 29.3L20.8 27.55z" fill="#e8e8e8" stroke="#444" stroke-width="0.5" stroke-linejoin="round"/><path d="M26.8 24.05L23.8 25.8L23.8 29.3L26.8 27.55z" fill="#c8c8c8" stroke="#444" stroke-width="0.5" stroke-linejoin="round"/><path d="M16.0 25.5L19.0 27.25L16.0 29.0L13.0 27.25z" fill="#fff" stroke="#444" stroke-width="0.5" stroke-linejoin="round"/><path d="M13.0 27.25L16.0 29.0L16.0 32.5L13.0 30.75z" fill="#e8e8e8" stroke="#444" stroke-width="0.5" stroke-linejoin="round"/><path d="M19.0 27.25L16.0 29.0L16.0 32.5L19.0 30.75z" fill="#c8c8c8" stroke="#444" stroke-width="0.5" stroke-linejoin="round"/><path d="M8.2 22.3L11.2 24.05L8.2 25.8L5.2 24.05z" fill="#fff" stroke="#444" stroke-width="0.5" stroke-linejoin="round"/><path d="M5.2 24.05L8.2 25.8L8.2 29.3L5.2 27.55z" fill="#e8e8e8" stroke="#444" stroke-width="0.5" stroke-linejoin="round"/><path d="M11.2 24.05L8.2 25.8L8.2 29.3L11.2 27.55z" fill="#c8c8c8" stroke="#444" stroke-width="0.5" stroke-linejoin="round"/><path d="M5.0 14.5L8.0 16.25L5.0 18.0L2.0 16.25z" fill="#fff" stroke="#444" stroke-width="0.5" stroke-linejoin="round"/><path d="M2.0 16.25L5.0 18.0L5.0 21.5L2.0 19.75z" fill="#e8e8e8" stroke="#444" stroke-width="0.5" stroke-linejoin="round"/><path d="M8.0 16.25L5.0 18.0L5.0 21.5L8.0 19.75z" fill="#c8c8c8" stroke="#444" stroke-width="0.5" stroke-linejoin="round"/><path d="M8.2 6.699999999999999L11.2 8.45L8.2 10.2L5.2 8.45z" fill="#fff" stroke="#444" stroke-width="0.5" stroke-linejoin="round"/><path d="M5.2 8.45L8.2 10.2L8.2 13.7L5.2 11.95z" fill="#e8e8e8" stroke="#444" stroke-width="0.5" stroke-linejoin="round"/><path d="M11.2 8.45L8.2 10.2L8.2 13.7L11.2 11.95z" fill="#c8c8c8" stroke="#444" stroke-width="0.5" stroke-linejoin="round"/><path d="M16 12.0L21.7 15.25L16 18.5L10.3 15.25z" fill="#fbb040" stroke="#5a3000" stroke-width="0.6" stroke-linejoin="round"/><path d="M10.3 15.25L16 18.5L16 25.0L10.3 21.75z" fill="#f59a1c" stroke="#5a3000" stroke-width="0.6" stroke-linejoin="round"/><path d="M21.7 15.25L16 18.5L16 25.0L21.7 21.75z" fill="#d9820f" stroke="#5a3000" stroke-width="0.6" stroke-linejoin="round"/><path d="M31 0l2.500 2.500-9 11.500-3.500-2.500z" fill="#f59a1c" stroke="#222" stroke-width="0.700"/><path d="M22 11l3 2.500q-3 7-7.500 8 3-4 1.500-6.500z" fill="#151515"/></svg>
<div class="grp" style="left:234px;top:91px;width:106px;height:34px;"><div class="btn" style="left:-1px;width:35px;border-left:none;"></div><div class="btn" style="left:34px;width:36px;"></div><div class="btn" style="left:70px;width:35px;"></div></div>
<svg style="left:234px;top:90px;" width="34" height="34" viewBox="0 0 34 34"><rect x="1.4" y="26.4" width="5.2" height="5.2" rx="0.6" fill="#f9a31a" stroke="#555" stroke-width="0.500"/><rect x="8.4" y="18.9" width="5.2" height="5.2" rx="0.6" fill="#f6f6f6" stroke="#555" stroke-width="0.500"/><rect x="15.9" y="11.4" width="5.2" height="5.2" rx="0.6" fill="#f6f6f6" stroke="#555" stroke-width="0.500"/><rect x="23.9" y="3.4" width="5.2" height="5.2" rx="0.6" fill="#f6f6f6" stroke="#555" stroke-width="0.500"/></svg>
<svg style="left:270px;top:90px;" width="34" height="34" viewBox="0 0 34 34"><rect x="14.4" y="4.2" width="5.200" height="5.200" rx="0.6" fill="#f9a31a" stroke="#555" stroke-width="0.500" transform="rotate(0 17.0 6.8)"/><rect x="22.3" y="7.5" width="5.200" height="5.200" rx="0.6" fill="#f6f6f6" stroke="#555" stroke-width="0.500" transform="rotate(45 24.9 10.1)"/><rect x="25.6" y="15.4" width="5.200" height="5.200" rx="0.6" fill="#f6f6f6" stroke="#555" stroke-width="0.500" transform="rotate(0 28.2 18.0)"/><rect x="22.3" y="23.3" width="5.200" height="5.200" rx="0.6" fill="#f6f6f6" stroke="#555" stroke-width="0.500" transform="rotate(45 24.9 25.9)"/><rect x="14.4" y="26.6" width="5.200" height="5.200" rx="0.6" fill="#f6f6f6" stroke="#555" stroke-width="0.500" transform="rotate(0 17.0 29.2)"/><rect x="6.5" y="23.3" width="5.200" height="5.200" rx="0.6" fill="#f6f6f6" stroke="#555" stroke-width="0.500" transform="rotate(45 9.1 25.9)"/><rect x="3.2" y="15.4" width="5.200" height="5.200" rx="0.6" fill="#f6f6f6" stroke="#555" stroke-width="0.500" transform="rotate(0 5.8 18.0)"/><rect x="6.5" y="7.5" width="5.200" height="5.200" rx="0.6" fill="#f6f6f6" stroke="#555" stroke-width="0.500" transform="rotate(45 9.1 10.1)"/></svg>
<svg style="left:306px;top:90px;" width="34" height="34" viewBox="0 0 34 34"><rect x="5.5" y="5.0" width="5.0" height="5.0" rx="0.6" fill="#f6f6f6" stroke="#555" stroke-width="0.500"/><rect x="15.5" y="5.0" width="5.0" height="5.0" rx="0.6" fill="#f6f6f6" stroke="#555" stroke-width="0.500"/><rect x="25.5" y="5.0" width="5.0" height="5.0" rx="0.6" fill="#f6f6f6" stroke="#555" stroke-width="0.500"/><rect x="5.5" y="15.2" width="5.0" height="5.0" rx="0.6" fill="#f6f6f6" stroke="#555" stroke-width="0.500"/><rect x="15.5" y="15.2" width="5.0" height="5.0" rx="0.6" fill="#f9a31a" stroke="#555" stroke-width="0.500"/><rect x="25.5" y="15.2" width="5.0" height="5.0" rx="0.6" fill="#f6f6f6" stroke="#555" stroke-width="0.500"/><rect x="5.5" y="25.4" width="5.0" height="5.0" rx="0.6" fill="#f6f6f6" stroke="#555" stroke-width="0.500"/><rect x="15.5" y="25.4" width="5.0" height="5.0" rx="0.6" fill="#f6f6f6" stroke="#555" stroke-width="0.500"/><rect x="25.5" y="25.4" width="5.0" height="5.0" rx="0.6" fill="#f6f6f6" stroke="#555" stroke-width="0.500"/></svg>
<div class="grp" style="left:344px;top:91px;width:286px;height:34px;"><div class="btn" style="left:-1px;width:35px;border-left:none;"></div><div class="btn" style="left:34px;width:36px;"></div><div class="btn" style="left:70px;width:35px;"></div><div class="btn" style="left:105px;width:36px;"></div><div class="btn" style="left:141px;width:36px;"></div><div class="btn" style="left:177px;width:36px;"></div><div class="btn" style="left:213px;width:36px;"></div><div class="btn" style="left:249px;width:36px;"></div></div>
<svg style="left:344px;top:90px;" width="34" height="34" viewBox="0 0 34 34"><path d="M17 7.5L26.1 12.75L17 18L7.9 12.75z" fill="#fafafa" stroke="#666" stroke-width="0.6" stroke-linejoin="round"/><path d="M7.9 12.75L17 18L17 28.5L7.9 23.25z" fill="#e6e6e6" stroke="#666" stroke-width="0.6" stroke-linejoin="round"/><path d="M26.1 12.75L17 18L17 28.5L26.1 23.25z" fill="#c2c2c2" stroke="#666" stroke-width="0.6" stroke-linejoin="round"/><circle cx="17" cy="5.5" r="2.3" fill="#4fe596" stroke="#1a7a48" stroke-width="0.500"/><circle cx="6" cy="11.5" r="2.3" fill="#4fe596" stroke="#1a7a48" stroke-width="0.500"/><circle cx="28" cy="11.5" r="2.3" fill="#4fe596" stroke="#1a7a48" stroke-width="0.500"/><circle cx="6" cy="24" r="2.3" fill="#4fe596" stroke="#1a7a48" stroke-width="0.500"/><circle cx="28" cy="24" r="2.3" fill="#4fe596" stroke="#1a7a48" stroke-width="0.500"/><circle cx="17" cy="30" r="2.3" fill="#4fe596" stroke="#1a7a48" stroke-width="0.500"/><circle cx="17" cy="17" r="2.3" fill="#4fe596" stroke="#1a7a48" stroke-width="0.500"/></svg>
<svg style="left:380px;top:90px;" width="34" height="34" viewBox="0 0 34 34"><path d="M17 2.0L20.0 3.75L17 5.5L14.0 3.75z" fill="#fff" stroke="#444" stroke-width="0.5" stroke-linejoin="round"/><path d="M14.0 3.75L17 5.5L17 9.0L14.0 7.25z" fill="#e8e8e8" stroke="#444" stroke-width="0.5" stroke-linejoin="round"/><path d="M20.0 3.75L17 5.5L17 9.0L20.0 7.25z" fill="#c8c8c8" stroke="#444" stroke-width="0.5" stroke-linejoin="round"/><path d="M6.5 8.0L9.5 9.75L6.5 11.5L3.5 9.75z" fill="#fff" stroke="#444" stroke-width="0.5" stroke-linejoin="round"/><path d="M3.5 9.75L6.5 11.5L6.5 15.0L3.5 13.25z" fill="#e8e8e8" stroke="#444" stroke-width="0.5" stroke-linejoin="round"/><path d="M9.5 9.75L6.5 11.5L6.5 15.0L9.5 13.25z" fill="#c8c8c8" stroke="#444" stroke-width="0.5" stroke-linejoin="round"/><path d="M27.5 8.0L30.5 9.75L27.5 11.5L24.5 9.75z" fill="#fff" stroke="#444" stroke-width="0.5" stroke-linejoin="round"/><path d="M24.5 9.75L27.5 11.5L27.5 15.0L24.5 13.25z" fill="#e8e8e8" stroke="#444" stroke-width="0.5" stroke-linejoin="round"/><path d="M30.5 9.75L27.5 11.5L27.5 15.0L30.5 13.25z" fill="#c8c8c8" stroke="#444" stroke-width="0.5" stroke-linejoin="round"/><path d="M6.5 20.5L9.5 22.25L6.5 24L3.5 22.25z" fill="#fff" stroke="#444" stroke-width="0.5" stroke-linejoin="round"/><path d="M3.5 22.25L6.5 24L6.5 27.5L3.5 25.75z" fill="#e8e8e8" stroke="#444" stroke-width="0.5" stroke-linejoin="round"/><path d="M9.5 22.25L6.5 24L6.5 27.5L9.5 25.75z" fill="#c8c8c8" stroke="#444" stroke-width="0.5" stroke-linejoin="round"/><path d="M27.5 20.5L30.5 22.25L27.5 24L24.5 22.25z" fill="#fff" stroke="#444" stroke-width="0.5" stroke-linejoin="round"/><path d="M24.5 22.25L27.5 24L27.5 27.5L24.5 25.75z" fill="#e8e8e8" stroke="#444" stroke-width="0.5" stroke-linejoin="round"/><path d="M30.5 22.25L27.5 24L27.5 27.5L30.5 25.75z" fill="#c8c8c8" stroke="#444" stroke-width="0.5" stroke-linejoin="round"/><path d="M17 26.0L20.0 27.75L17 29.5L14.0 27.75z" fill="#fff" stroke="#444" stroke-width="0.5" stroke-linejoin="round"/><path d="M14.0 27.75L17 29.5L17 33.0L14.0 31.25z" fill="#e8e8e8" stroke="#444" stroke-width="0.5" stroke-linejoin="round"/><path d="M20.0 27.75L17 29.5L17 33.0L20.0 31.25z" fill="#c8c8c8" stroke="#444" stroke-width="0.5" stroke-linejoin="round"/><path d="M17 11.5L22.2 14.5L17 17.5L11.8 14.5z" fill="#7af0b2" stroke="#14603a" stroke-width="0.6" stroke-linejoin="round"/><path d="M11.8 14.5L17 17.5L17 23.5L11.8 20.5z" fill="#4fe596" stroke="#14603a" stroke-width="0.6" stroke-linejoin="round"/><path d="M22.2 14.5L17 17.5L17 23.5L22.2 20.5z" fill="#2fb870" stroke="#14603a" stroke-width="0.6" stroke-linejoin="round"/></svg>
<svg style="left:416px;top:90px;" width="34" height="34" viewBox="0 0 34 34"><path d="M11 4l9 5.500-11 3.500z" fill="#7af0b2" stroke="#14603a" stroke-width="0.600" stroke-linejoin="round"/><path d="M4 11l8 5v12l-8-5.500z" fill="#4fe596" stroke="#14603a" stroke-width="0.600" stroke-linejoin="round"/><path d="M13 16l8-3v9l-5 4.500z" fill="#35c07a" stroke="#14603a" stroke-width="0.600" stroke-linejoin="round"/><path d="M21 9l8 2.500-1 13-6-2z" fill="#4fe596" stroke="#14603a" stroke-width="0.600" stroke-linejoin="round"/><path d="M17 19l10-2 1.500 10-9 3z" fill="#2fb870" stroke="#14603a" stroke-width="0.600" stroke-linejoin="round"/><path d="M6 27l7 5 9-2-8-3z" fill="#4fe596" stroke="#14603a" stroke-width="0.600" stroke-linejoin="round"/></svg>
<svg style="left:451px;top:90px;" width="34" height="34" viewBox="0 0 34 34"><path d="M17 5.5L27.4 11.5L17 17.5L6.6 11.5z" fill="#6cf0aa" stroke="#14603a" stroke-width="0.7" stroke-linejoin="round"/><path d="M6.6 11.5L17 17.5L17 29.5L6.6 23.5z" fill="#4fe596" stroke="#14603a" stroke-width="0.7" stroke-linejoin="round"/><path d="M27.4 11.5L17 17.5L17 29.5L27.4 23.5z" fill="#3cd084" stroke="#14603a" stroke-width="0.7" stroke-linejoin="round"/><path d="M7 12l6 5 4-4 5 5 5-7M13 17l-3 7 7 5M17 13v-7M22 18l-1 7 6-2M10 24l-3-3M21 25l-4 4M13 17l8 1" stroke="#14603a" stroke-width="0.700" fill="none"/></svg>
<svg style="left:487px;top:90px;" width="34" height="34" viewBox="0 0 34 34"><path d="M7 24.3L10.7 26.4L7 28.5L3.3 26.4z" fill="#fff" stroke="#444" stroke-width="0.5" stroke-linejoin="round"/><path d="M3.3 26.4L7 28.5L7 32.7L3.3 30.6z" fill="#e8e8e8" stroke="#444" stroke-width="0.5" stroke-linejoin="round"/><path d="M10.7 26.4L7 28.5L7 32.7L10.7 30.6z" fill="#c8c8c8" stroke="#444" stroke-width="0.5" stroke-linejoin="round"/><path d="M6 16.8L9.7 18.9L6 21L2.3 18.9z" fill="#fff" stroke="#444" stroke-width="0.5" stroke-linejoin="round"/><path d="M2.3 18.9L6 21L6 25.2L2.3 23.1z" fill="#e8e8e8" stroke="#444" stroke-width="0.5" stroke-linejoin="round"/><path d="M9.7 18.9L6 21L6 25.2L9.7 23.1z" fill="#c8c8c8" stroke="#444" stroke-width="0.5" stroke-linejoin="round"/><path d="M9 9.8L12.7 11.9L9 14L5.3 11.9z" fill="#fff" stroke="#444" stroke-width="0.5" stroke-linejoin="round"/><path d="M5.3 11.9L9 14L9 18.2L5.3 16.1z" fill="#e8e8e8" stroke="#444" stroke-width="0.5" stroke-linejoin="round"/><path d="M12.7 11.9L9 14L9 18.2L12.7 16.1z" fill="#c8c8c8" stroke="#444" stroke-width="0.5" stroke-linejoin="round"/><path d="M16 4.3L19.7 6.4L16 8.5L12.3 6.4z" fill="#fff" stroke="#444" stroke-width="0.5" stroke-linejoin="round"/><path d="M12.3 6.4L16 8.5L16 12.7L12.3 10.6z" fill="#e8e8e8" stroke="#444" stroke-width="0.5" stroke-linejoin="round"/><path d="M19.7 6.4L16 8.5L16 12.7L19.7 10.6z" fill="#c8c8c8" stroke="#444" stroke-width="0.5" stroke-linejoin="round"/><path d="M25.5 1.9000000000000004L29.5 4.2L25.5 6.5L21.5 4.2z" fill="#7af0b2" stroke="#14603a" stroke-width="0.6" stroke-linejoin="round"/><path d="M21.5 4.2L25.5 6.5L25.5 11.1L21.5 8.8z" fill="#4fe596" stroke="#14603a" stroke-width="0.6" stroke-linejoin="round"/><path d="M29.5 4.2L25.5 6.5L25.5 11.1L29.5 8.8z" fill="#2fb870" stroke="#14603a" stroke-width="0.6" stroke-linejoin="round"/></svg>
<svg style="left:523px;top:90px;" width="34" height="34" viewBox="0 0 34 34"><path d="M6.500 6h21l.5 7h-1.500q-1-4.500-5-4.500h-2v18q0 2 3 2v1.500h-11v-1.500q3 0 3-2v-18h-2q-4 0-5 4.500h-1.500z" fill="#4fe596" stroke="#14603a" stroke-width="0.700"/></svg>
<svg style="left:559px;top:90px;" width="34" height="34" viewBox="0 0 34 34"><path d="M4 3q-1 8 4 10t8 5" stroke="#151515" stroke-width="1.300" fill="none"/><path d="M22 13.5L29.4 17.75L22 22L14.6 17.75z" fill="#7af0b2" stroke="#14603a" stroke-width="0.7" stroke-linejoin="round"/><path d="M14.6 17.75L22 22L22 30.5L14.6 26.25z" fill="#4fe596" stroke="#14603a" stroke-width="0.7" stroke-linejoin="round"/><path d="M29.4 17.75L22 22L22 30.5L29.4 26.25z" fill="#2fb870" stroke="#14603a" stroke-width="0.7" stroke-linejoin="round"/></svg>
<svg style="left:595px;top:90px;" width="34" height="34" viewBox="0 0 34 34"><path d="M30 5q-2 8-8 9-7 1-9-3 0-3 3-3 2 .5 2 2.500M22 14q4 6 0 12-3 4-6 3-2-2 0-3.500 2-.5 2.500 1.500M13 11q-6 0-7 6t4 8q3 0 3-2.500-1-2-3-1" stroke="#14603a" stroke-width="3.600" fill="none" stroke-linecap="round"/><path d="M30 5q-2 8-8 9-7 1-9-3 0-3 3-3 2 .5 2 2.500M22 14q4 6 0 12-3 4-6 3-2-2 0-3.500 2-.5 2.500 1.500M13 11q-6 0-7 6t4 8q3 0 3-2.500-1-2-3-1" stroke="#4fe596" stroke-width="2.400" fill="none" stroke-linecap="round"/></svg>
<div class="grp" style="left:634px;top:91px;width:182px;height:34px;border-top-right-radius:0;border-bottom-right-radius:0;border-right:none;"><div class="btn" style="left:-1px;width:34px;border-left:none;"></div><div class="btn" style="left:33px;width:36px;"></div><div class="btn" style="left:69px;width:36px;"></div><div class="btn" style="left:105px;width:36px;"></div><div class="btn" style="left:141px;width:36px;"></div><div class="btn" style="left:177px;width:36px;"></div></div>
<svg style="left:634px;top:90px;" width="34" height="34" viewBox="0 0 34 34"><path d="M10 5l5-2.500q9 8 10 20l-4 3z" fill="#7f8fd6" stroke="#2a3270" stroke-width="0.700"/><path d="M10 5q3 10 1 19l10 1.500q-1-10-11-20.500z" fill="#9aa8e6" stroke="#2a3270" stroke-width="0.700"/><path d="M10.500 10l8 3M11.500 16l8.500 2.500" stroke="#2a3270" stroke-width="0.600"/><path d="M11 24l-4 5.500 14 2 4-6z" fill="#f2f2f2" stroke="#555" stroke-width="0.700"/><path d="M21 25.500l0 6 4-6z" fill="#cfcfcf" stroke="#555" stroke-width="0.500"/></svg>
<svg style="left:669px;top:90px;" width="34" height="34" viewBox="0 0 34 34"><path d="M18 8l-10 19h20z" fill="#7f9fe0" stroke="#2a3270" stroke-width="0.800"/><circle cx="18" cy="6.500" r="3" fill="#f4f4f4" stroke="#555" stroke-width="0.600"/><circle cx="7" cy="27.500" r="2.800" fill="#f4f4f4" stroke="#555" stroke-width="0.600"/><text x="8.500" y="31.500" font-family="Liberation Sans,sans-serif" font-size="20" font-weight="bold" font-style="italic" fill="#333" stroke="#333" stroke-width="2.400" stroke-linejoin="round">fx</text><text x="8.500" y="31.500" font-family="Liberation Sans,sans-serif" font-size="20" font-weight="bold" font-style="italic" fill="#f8f8f8" stroke="#f8f8f8" stroke-width="0.500">fx</text></svg>
<svg style="left:705px;top:90px;" width="34" height="34" viewBox="0 0 34 34"><path d="M17.0 1.5L30.4 9.2L30.4 24.8L17.0 32.5L3.6 24.8L3.6 9.2z" fill="#f07a7a"/><path d="M17 1.5L30.4 9.25L17 17z" fill="#f5a0a0"/><path d="M17 1.5L3.6 9.25L17 17z" fill="#f28c8c"/><path d="M3.6 24.75L17 32.5L17 17z" fill="#e96060"/><path d="M30.4 24.75L17 32.5L17 17z" fill="#ec6c6c"/><path d="M3.6 13.125L17 8.475L30.4 13.125L30.4 20.875L17 25.525L3.6 20.875z" fill="#e8262c" opacity="0.75"/><circle cx="17" cy="17" r="8.200" fill="#e8262c" stroke="#8a0a10" stroke-width="1.600"/></svg>
<svg style="left:741px;top:90px;" width="34" height="34" viewBox="0 0 34 34"><path d="M17.0 1.5L30.4 9.2L30.4 24.8L17.0 32.5L3.6 24.8L3.6 9.2z" fill="#f07a7a"/><path d="M17 1.5L30.4 9.25L17 17z" fill="#f5a0a0"/><path d="M17 1.5L3.6 9.25L17 17z" fill="#f28c8c"/><path d="M3.6 24.75L17 32.5L17 17z" fill="#e96060"/><path d="M30.4 24.75L17 32.5L17 17z" fill="#ec6c6c"/><path d="M3.6 13.125L17 8.475L30.4 13.125L30.4 20.875L17 25.525L3.6 20.875z" fill="#e8262c" opacity="0.75"/><path d="M17 7a6.500 6.500 0 0 1 4 11.600v3.400h-8v-3.400A6.500 6.500 0 0 1 17 7z" fill="#e8262c" stroke="#8a0a10" stroke-width="1.500"/><rect x="14.500" y="22" width="5" height="4" rx="1" fill="#8a0a10"/></svg>
<svg style="left:777px;top:90px;" width="34" height="34" viewBox="0 0 34 34"><path d="M17.0 1.5L30.4 9.2L30.4 24.8L17.0 32.5L3.6 24.8L3.6 9.2z" fill="#f07a7a"/><path d="M17 1.5L30.4 9.25L17 17z" fill="#f5a0a0"/><path d="M17 1.5L3.6 9.25L17 17z" fill="#f28c8c"/><path d="M3.6 24.75L17 32.5L17 17z" fill="#e96060"/><path d="M30.4 24.75L17 32.5L17 17z" fill="#ec6c6c"/><path d="M3.6 13.125L17 8.475L30.4 13.125L30.4 20.875L17 25.525L3.6 20.875z" fill="#e8262c" opacity="0.75"/><path d="M9.500 23a4 4 0 0 1 0-8 5.500 5.500 0 0 1 10.500-2 4.500 4.500 0 0 1 5.500 5 3 3 0 0 1-1 5z" fill="#e8262c" stroke="#8a0a10" stroke-width="1.400"/></svg>
<div class="grp" style="left:1px;top:144px;width:34px;height:107px;"><div style="left:0;top:1px;width:100%;height:100%"><div class="sel" style="left:0;width:100%;top:-1px;height:34px;border-top:1px solid #5a5a5a;border-top:none;"></div><div class="" style="left:0;width:100%;top:33px;height:36px;border-top:1px solid #5a5a5a;"></div><div class="" style="left:0;width:100%;top:69px;height:36px;border-top:1px solid #5a5a5a;"></div></div></div>
<svg style="left:1px;top:145px;" width="34" height="34" viewBox="0 0 34 34"><path d="M17 5L27.4 11.0L17 17L6.6 11.0z" fill="#6c6c6c" stroke="#f59a1c" stroke-width="1.6" stroke-linejoin="round"/><path d="M6.6 11.0L17 17L17 29L6.6 23.0z" fill="#5a5a5a" stroke="#f59a1c" stroke-width="1.6" stroke-linejoin="round"/><path d="M27.4 11.0L17 17L17 29L27.4 23.0z" fill="#4a4a4a" stroke="#f59a1c" stroke-width="1.6" stroke-linejoin="round"/><path d="M17 6L26.6 11.5L17 17L7.4 11.5z" fill="#707070" stroke="#2a2a2a" stroke-width="0.5" stroke-linejoin="round"/><path d="M7.4 11.5L17 17L17 28L7.4 22.5z" fill="#5c5c5c" stroke="#2a2a2a" stroke-width="0.5" stroke-linejoin="round"/><path d="M26.6 11.5L17 17L17 28L26.6 22.5z" fill="#4a4a4a" stroke="#2a2a2a" stroke-width="0.5" stroke-linejoin="round"/><path d="M33 27v6h-6z" fill="#1a1a1a"/></svg>
<svg style="left:1px;top:180px;" width="34" height="34" viewBox="0 0 34 34"><path d="M17 5L27.4 11.0L17 17L6.6 11.0z" fill="#747474" stroke="#2a2a2a" stroke-width="0.7" stroke-linejoin="round"/><path d="M6.6 11.0L17 17L17 29L6.6 23.0z" fill="#606060" stroke="#2a2a2a" stroke-width="0.7" stroke-linejoin="round"/><path d="M27.4 11.0L17 17L17 29L27.4 23.0z" fill="#e8e8e8" stroke="#2a2a2a" stroke-width="0.7" stroke-linejoin="round"/><path d="M17 17l10.400-6v12l-10.400 6z" fill="#fff" stroke="#f59a1c" stroke-width="1.300"/><path d="M17 17l3.500-2v4l-3.500 2zM24 13l3.400-2v4l-3.400 2zM20.500 19l3.500-2v4l-3.500 2zM17 25l3.500-2v4l-3.500 2zM24 21l3.400-2v4l-3.400 2z" fill="#151515"/></svg>
<svg style="left:1px;top:216px;" width="34" height="34" viewBox="0 0 34 34"><path d="M17 7l14.500 9.500L17 26.500 2.500 16.500z" fill="#5a5a5a" stroke="#f59a1c" stroke-width="1.300"/><path d="M13.400 9.500l14.500 9.500M9.800 12l14.500 9.500M6.200 14.500l14.500 9.500M20.600 9.500L6.100 19M24.200 12L9.700 21.500M27.800 14.500L13.300 24" stroke="#f59a1c" stroke-width="1.100"/></svg>
<div class="grp" style="left:1px;top:254px;width:34px;height:107px;"><div style="left:0;top:1px;width:100%;height:100%"><div class="" style="left:0;width:100%;top:-1px;height:34px;border-top:1px solid #5a5a5a;border-top:none;"></div><div class="" style="left:0;width:100%;top:33px;height:36px;border-top:1px solid #5a5a5a;"></div><div class="" style="left:0;width:100%;top:69px;height:36px;border-top:1px solid #5a5a5a;"></div></div></div>
<svg style="left:1px;top:255px;" width="34" height="34" viewBox="0 0 34 34"><path d="M16 7.5L26.0 13.25L16 19L6.0 13.25z" fill="#6c6c6c" stroke="#2a2a2a" stroke-width="0.8" stroke-linejoin="round"/><path d="M6.0 13.25L16 19L16 30.5L6.0 24.75z" fill="#5c5c5c" stroke="#2a2a2a" stroke-width="0.8" stroke-linejoin="round"/><path d="M26.0 13.25L16 19L16 30.5L26.0 24.75z" fill="#4a4a4a" stroke="#2a2a2a" stroke-width="0.8" stroke-linejoin="round"/><circle cx="15" cy="14.500" r="2.700" fill="#f59a1c"/><circle cx="28" cy="10" r="2.700" fill="#f59a1c"/></svg>
<svg style="left:1px;top:290px;" width="34" height="34" viewBox="0 0 34 34"><path d="M16 7.5L26.0 13.25L16 19L6.0 13.25z" fill="#6c6c6c" stroke="#2a2a2a" stroke-width="0.8" stroke-linejoin="round"/><path d="M6.0 13.25L16 19L16 30.5L6.0 24.75z" fill="#5c5c5c" stroke="#2a2a2a" stroke-width="0.8" stroke-linejoin="round"/><path d="M26.0 13.25L16 19L16 30.5L26.0 24.75z" fill="#4a4a4a" stroke="#2a2a2a" stroke-width="0.8" stroke-linejoin="round"/><path d="M6 13.300l10-5.800M16 19l10-5.800" stroke="#f59a1c" stroke-width="2"/></svg>
<svg style="left:1px;top:326px;" width="34" height="34" viewBox="0 0 34 34"><path d="M16 7.5L26.0 13.25L16 19L6.0 13.25z" fill="#f59a1c" stroke="#2a2a2a" stroke-width="0.8" stroke-linejoin="round"/><path d="M6.0 13.25L16 19L16 30.5L6.0 24.75z" fill="#5c5c5c" stroke="#2a2a2a" stroke-width="0.8" stroke-linejoin="round"/><path d="M26.0 13.25L16 19L16 30.5L26.0 24.75z" fill="#4a4a4a" stroke="#2a2a2a" stroke-width="0.8" stroke-linejoin="round"/></svg>
<div class="grp" style="left:1px;top:371px;width:34px;height:109px;"><div style="left:0;top:1px;width:100%;height:100%"><div class="" style="left:0;width:100%;top:-1px;height:36px;border-top:1px solid #5a5a5a;border-top:none;"></div><div class="sel" style="left:0;width:100%;top:35px;height:36px;border-top:1px solid #5a5a5a;"></div><div class="sel" style="left:0;width:100%;top:71px;height:36px;border-top:1px solid #5a5a5a;"></div></div></div>
<svg style="left:1px;top:373px;" width="34" height="34" viewBox="0 0 34 34"><path d="M7 5v23h22" stroke="#222" stroke-width="3.400" fill="none" stroke-linejoin="round"/><path d="M7 3l-4 7h8zM32 28l-7-4v8z" fill="#f59a1c" stroke="#222" stroke-width="0.800"/><path d="M7 8v20h20" stroke="#f59a1c" stroke-width="2" fill="none"/></svg>
<svg style="left:1px;top:409px;" width="34" height="34" viewBox="0 0 34 34"><path d="M3 16q6-9 11-2t9-4" stroke="#151515" stroke-width="1.500" fill="none"/><rect x="17" y="11" width="11" height="18" rx="5" fill="#f59a1c" stroke="#222" stroke-width="1"/><path d="M17 18h11M22.500 11v7" stroke="#222" stroke-width="0.900"/></svg>
<svg style="left:1px;top:445px;" width="34" height="34" viewBox="0 0 34 34"><circle cx="17" cy="17" r="11.500" fill="#8a8a8a" stroke="#3a3a3a" stroke-width="1.200"/><circle cx="17" cy="17" r="9" fill="#7a7a7a" stroke="#555" stroke-width="0.600"/><text x="17" y="22.500" font-family="Liberation Sans,sans-serif" font-size="15" font-weight="bold" fill="#151515" text-anchor="middle">S</text><path d="M33 27v6h-6z" fill="#1a1a1a"/></svg>
<div class="grp" style="left:1px;top:490px;width:34px;height:36px;"><div style="left:0;top:1px;width:100%;height:100%"><div class="" style="left:0;width:100%;top:-1px;height:35px;border-top:1px solid #5a5a5a;border-top:none;"></div></div></div>
<svg style="left:1px;top:492px;" width="34" height="34" viewBox="0 0 34 34"><g transform="translate(16.500,17.500) rotate(-45)"><path d="M-10.500 -9L-10.500 2A10.500 10.500 0 0 0 10.500 2L10.500 -9L4.500 -9L4.500 2A4.500 4.500 0 0 1 -4.500 2L-4.500 -9Z" fill="#f59a1c" stroke="#222" stroke-width="1"/><rect x="-10.500" y="-10" width="6" height="4.500" fill="#151515"/><rect x="4.500" y="-10" width="6" height="4.500" fill="#151515"/></g><path d="M33 28.500v4.500h-4.500z" fill="#1a1a1a"/></svg>
<div class="grp" style="left:1px;top:536px;width:34px;height:71px;"><div style="left:0;top:1px;width:100%;height:100%"><div class="sel" style="left:0;width:100%;top:-1px;height:35px;border-top:1px solid #5a5a5a;border-top:none;"></div><div class="" style="left:0;width:100%;top:34px;height:35px;border-top:1px solid #5a5a5a;"></div></div></div>
<svg style="left:1px;top:538px;" width="34" height="34" viewBox="0 0 34 34"><path d="M15 4l13 8-13 8.500L2 12z" fill="none" stroke="#151515" stroke-width="1"/><path d="M11.700 6l13 8M8.500 8l13 8M5.200 10l13 8M18.200 6l-13 8.200M21.500 8l-13 8.200M24.700 10l-13 8.200" stroke="#151515" stroke-width="0.900"/><rect x="20" y="21" width="10" height="8.500" rx="1" fill="#151515"/><path d="M22 21v-2.500a3 3 0 0 1 6 0v2.500" stroke="#151515" stroke-width="1.600" fill="none"/><rect x="23.500" y="23.500" width="3" height="3.500" fill="#eee"/></svg>
<svg style="left:1px;top:572px;" width="34" height="34" viewBox="0 0 34 34"><path d="M15 4l13 8-13 8.500L2 12z" fill="none" stroke="#151515" stroke-width="1"/><path d="M11.700 6l13 8M8.500 8l13 8M5.200 10l13 8M18.200 6l-13 8.200M21.500 8l-13 8.200M24.700 10l-13 8.200" stroke="#151515" stroke-width="0.900"/><path d="M20.500 27a4.500 4.500 0 0 1 3-7.500M28.500 22a4.500 4.500 0 0 1-3 7.500" stroke="#f59a1c" stroke-width="2.400" fill="none"/><path d="M22 17l4 2.500-3.500 2.500zM27 32l-4-2.500 3.500-2.500z" fill="#f59a1c"/></svg>
<div class="hz" style="left:44px;top:130px;width:27px;height:5px;"></div>
<div class="grp" style="left:40px;top:137px;width:34px;height:287px;"><div style="left:0;top:1px;width:100%;height:100%"><div class="" style="left:0;width:100%;top:-1px;height:34px;border-top:1px solid #5a5a5a;border-top:none;"></div><div class="" style="left:0;width:100%;top:33px;height:36px;border-top:1px solid #5a5a5a;"></div><div class="" style="left:0;width:100%;top:69px;height:36px;border-top:1px solid #5a5a5a;"></div><div class="" style="left:0;width:100%;top:105px;height:36px;border-top:1px solid #5a5a5a;"></div><div class="" style="left:0;width:100%;top:141px;height:36px;border-top:1px solid #5a5a5a;"></div><div class="" style="left:0;width:100%;top:177px;height:36px;border-top:1px solid #5a5a5a;"></div><div class="" style="left:0;width:100%;top:213px;height:36px;border-top:1px solid #5a5a5a;"></div><div class="" style="left:0;width:100%;top:249px;height:36px;border-top:1px solid #5a5a5a;"></div></div></div>
<svg style="left:40px;top:138px;" width="34" height="34" viewBox="0 0 34 34"><path d="M17.0 5.5L21.8 10.3L18.8 10.3L18.8 15.2L23.7 15.2L23.7 12.2L28.5 17.0L23.7 21.8L23.7 18.8L18.8 18.8L18.8 23.7L21.8 23.7L17.0 28.5L12.2 23.7L15.2 23.7L15.2 18.8L10.3 18.8L10.3 21.8L5.5 17.0L10.3 12.2L10.3 15.2L15.2 15.2L15.2 10.3L12.2 10.3z" fill="#f9b021" stroke="#7a4a00" stroke-width="0.7" stroke-linejoin="round"/></svg>
<div class="hz" style="left:83px;top:130px;width:27px;height:5px;"></div>
<div class="grp" style="left:79px;top:137px;width:34px;height:71px;"><div style="left:0;top:1px;width:100%;height:100%"><div class="" style="left:0;width:100%;top:-1px;height:34px;border-top:1px solid #5a5a5a;border-top:none;"></div><div class="" style="left:0;width:100%;top:33px;height:36px;border-top:1px solid #5a5a5a;"></div></div></div>
<svg style="left:79px;top:138px;" width="34" height="34" viewBox="0 0 34 34"><text x="11.500" y="21" font-family="Liberation Sans,sans-serif" font-size="25" font-weight="bold" fill="#ee6a33" stroke="#5a2008" stroke-width="2" stroke-linejoin="round" text-anchor="middle">?</text><text x="11.500" y="21" font-family="Liberation Sans,sans-serif" font-size="25" font-weight="bold" fill="#ee6a33" stroke="#ee6a33" stroke-width="0.700" text-anchor="middle">?</text><path d="M19 17l12 5.500-4.500 1.500-1 5z" fill="#151515"/><path d="M33 27v6h-6z" fill="#1a1a1a"/></svg>
<svg style="left:78px;top:172px;" width="36" height="36" viewBox="0 0 36 36"><circle cx="17" cy="18" r="13.6" fill="none" stroke="#2a2a2a" stroke-width="2.6"/><circle cx="17" cy="18" r="13.6" fill="none" stroke="#e8622a" stroke-width="1.5"/><path d="M11 11l11 5-4.2 1.6 4.6 5.8-2.2 1.7-4.6-5.8-2.8 3.6z" fill="#1a1a1a"/><path d="M34.5 29.5v5h-5z" fill="#1a1a1a"/></svg>
<div style="left:117px;top:129px;width:604px;height:1px;background:#6a6a6a"></div>
<div style="left:117px;top:129px;width:1px;height:60px;background:#6a6a6a"></div>
<div class="hz" style="left:123px;top:136px;width:12px;height:11px;"></div>
<span class="t" style="top:134.5px;font-size:11px;line-height:15px;color:#d2d2d2;left:144px;letter-spacing:0.000px;">查看</span>
<span class="t" style="top:134.5px;font-size:11px;line-height:15px;color:#d2d2d2;left:180px;letter-spacing:0.000px;">摄像机</span>
<span class="t" style="top:134.5px;font-size:11px;line-height:15px;color:#d2d2d2;left:227px;letter-spacing:0.000px;">显示</span>
<span class="t" style="top:134.5px;font-size:11px;line-height:15px;color:#d2d2d2;left:263px;letter-spacing:0.000px;">选项</span>
<span class="t" style="top:134.5px;font-size:11px;line-height:15px;color:#d2d2d2;left:299px;letter-spacing:0.000px;">过滤</span>
<span class="t" style="top:134.5px;font-size:11px;line-height:15px;color:#d2d2d2;left:335px;letter-spacing:0.000px;">面板</span>
<span class="t" style="top:134.0px;font-size:12px;line-height:16px;color:#d2d2d2;left:371px;letter-spacing:-0.337px;">ProRender</span>
<svg style="left:653px;top:134px;" width="14" height="14" viewBox="0 0 14 14"><path d="M7 0l2.600 4h-5.200zM7 14l2.600-4h-5.200zM0 7l4-2.600v5.200zM14 7l-4-2.600v5.200z" fill="#1c1c1c"/></svg>
<svg style="left:670px;top:133px;" width="14" height="16" viewBox="0 0 14 16"><path d="M7 0l4.500 5h-3v6h3l-4.500 5-4.500-5h3v-6h-3z" fill="#1c1c1c"/></svg>
<svg style="left:687px;top:133px;" width="14" height="16" viewBox="0 0 14 16"><path d="M3 12A5.500 5.500 0 0 1 6 3M11 4a5.500 5.500 0 0 1-3 9" stroke="#1c1c1c" stroke-width="1.500" fill="none"/><path d="M5 .5l4 2.500-4 2.500zM9 15.500l-4-2.500 4-2.500z" fill="#1c1c1c"/><circle cx="7" cy="8" r="1.200" fill="#1c1c1c"/></svg>
<svg style="left:704px;top:134px;" width="14" height="14" viewBox="0 0 14 14"><rect x="1" y="1" width="12" height="12" rx="1.500" fill="none" stroke="#1c1c1c" stroke-width="1.400"/><path d="M1 7h6v6" stroke="#1c1c1c" stroke-width="1.200" fill="none"/></svg>
<div style="left:118px;top:153px;width:603px;height:40px;background:linear-gradient(#8b8b8b,#7e7e7e);border-top:1px solid #b5b5b5;border-left:1px solid #b5b5b5;border-right:1px solid #9a9a9a"></div>
<div style="left:121px;top:156px;width:48px;height:18px;background:#939393;border-radius:3px"></div>
<span class="t" style="top:157.5px;font-size:11px;line-height:15px;color:#eaeaea;left:123px;letter-spacing:0.000px;">透视视图</span>
<div class="hz" style="left:729px;top:130px;width:27px;height:5px;"></div>
<div class="grp" style="left:725px;top:138px;width:34px;height:60px;"><div style="left:0;top:34px;width:100%;height:1px;background:#565656"></div></div>
<svg style="left:725px;top:139px;" width="34" height="34" viewBox="0 0 34 34"><g opacity="0.700"><path d="M17 6.5L27.9 12.75L17 19L6.1 12.75z" fill="#7a7a7a" stroke="#8c8c8c" stroke-width="1.1" stroke-linejoin="round"/><path d="M6.1 12.75L17 19L17 31.5L6.1 25.25z" fill="#6e6e6e" stroke="#8c8c8c" stroke-width="1.1" stroke-linejoin="round"/><path d="M27.9 12.75L17 19L17 31.5L27.9 25.25z" fill="#666" stroke="#8c8c8c" stroke-width="1.1" stroke-linejoin="round"/><circle cx="6.500" cy="7.500" r="2.200" fill="#707070" stroke="#8c8c8c"/><circle cx="28" cy="9.500" r="2.200" fill="#707070" stroke="#8c8c8c"/><circle cx="15" cy="14.500" r="2.200" fill="#707070" stroke="#8c8c8c"/></g></svg>
<div class="hz" style="left:767px;top:130px;width:45px;height:5px;"></div>
<div class="grp" style="left:764px;top:138px;width:52px;height:60px;"><div style="left:0;top:34px;width:100%;height:1px;background:#565656"></div></div>
<svg style="left:762px;top:138px;" width="40" height="34" viewBox="0 0 40 34"><g opacity="0.700"><path d="M14 2.3L20.3 5.9L14 9.5L7.7 5.9z" fill="#7a7a7a" stroke="#8c8c8c" stroke-width="0.9" stroke-linejoin="round"/><path d="M7.7 5.9L14 9.5L14 16.7L7.7 13.1z" fill="#6e6e6e" stroke="#8c8c8c" stroke-width="0.9" stroke-linejoin="round"/><path d="M20.3 5.9L14 9.5L14 16.7L20.3 13.1z" fill="#666" stroke="#8c8c8c" stroke-width="0.9" stroke-linejoin="round"/><path d="M27.5 4.3L33.8 7.9L27.5 11.5L21.2 7.9z" fill="#7a7a7a" stroke="#8c8c8c" stroke-width="0.9" stroke-linejoin="round"/><path d="M21.2 7.9L27.5 11.5L27.5 18.7L21.2 15.1z" fill="#6e6e6e" stroke="#8c8c8c" stroke-width="0.9" stroke-linejoin="round"/><path d="M33.8 7.9L27.5 11.5L27.5 18.7L33.8 15.1z" fill="#666" stroke="#8c8c8c" stroke-width="0.9" stroke-linejoin="round"/><path d="M14 15.8L20.3 19.4L14 23L7.7 19.4z" fill="#7a7a7a" stroke="#8c8c8c" stroke-width="0.9" stroke-linejoin="round"/><path d="M7.7 19.4L14 23L14 30.2L7.7 26.6z" fill="#6e6e6e" stroke="#8c8c8c" stroke-width="0.9" stroke-linejoin="round"/><path d="M20.3 19.4L14 23L14 30.2L20.3 26.6z" fill="#666" stroke="#8c8c8c" stroke-width="0.9" stroke-linejoin="round"/><path d="M27.5 17.8L33.8 21.4L27.5 25L21.2 21.4z" fill="#7a7a7a" stroke="#8c8c8c" stroke-width="0.9" stroke-linejoin="round"/><path d="M21.2 21.4L27.5 25L27.5 32.2L21.2 28.6z" fill="#6e6e6e" stroke="#8c8c8c" stroke-width="0.9" stroke-linejoin="round"/><path d="M33.8 21.4L27.5 25L27.5 32.2L33.8 28.6z" fill="#666" stroke="#8c8c8c" stroke-width="0.9" stroke-linejoin="round"/></g></svg>
<svg style="left:759px;top:176px;" width="34" height="14" viewBox="0 0 34 14"><g opacity="0.600"><path d="M17 2l9 4.500v8M17 2L8 6.500v8M8 6.500l9 4.500 9-4.500M17 11v4" stroke="#8c8c8c" stroke-width="1" fill="none"/></g></svg>
<svg style="left:725px;top:175px;" width="34" height="14" viewBox="0 0 34 14"><path d="M9 11.500L18 4.500L24.500 7.500L16 12.500Z" fill="#f59a1c" stroke="#5a3000" stroke-width="0.500"/><path d="M18 4.500L33 0L24.500 7.500Z" fill="#151515"/></svg>
<div style="left:819px;top:74px;width:549px;height:307px;background:#4c4c4c;border:1px solid #5e5e5e;border-bottom-color:#3a3a3a"></div>
<div style="left:819px;top:51px;width:34px;height:24px;background:linear-gradient(#6b6b6b,#565656);border:1px solid #3a3a3a;border-bottom:none;border-radius:5px 5px 0 0"></div>
<span class="t" style="top:55.5px;font-size:11px;line-height:15px;color:#f5a623;left:836.0px;transform:translateX(-50%);">对象</span>
<div style="left:853px;top:53px;width:34px;height:21px;background:#383838;border:1px solid #303030;border-bottom:none;border-radius:4px 4px 0 0"></div>
<span class="t" style="top:56.5px;font-size:11px;line-height:15px;color:#6f6f6f;left:870.0px;transform:translateX(-50%);">场次</span>
<div style="left:887px;top:53px;width:67px;height:21px;background:#383838;border:1px solid #303030;border-bottom:none;border-radius:4px 4px 0 0"></div>
<span class="t" style="top:56.5px;font-size:11px;line-height:15px;color:#6f6f6f;left:920.5px;transform:translateX(-50%);">内容浏览器</span>
<div style="left:955px;top:53px;width:33px;height:21px;background:#383838;border:1px solid #303030;border-bottom:none;border-radius:4px 4px 0 0"></div>
<span class="t" style="top:56.5px;font-size:11px;line-height:15px;color:#6f6f6f;left:971.5px;transform:translateX(-50%);">构造</span>
<div class="hz" style="left:824px;top:81px;width:12px;height:11px;"></div>
<span class="t" style="top:79.5px;font-size:11px;line-height:15px;color:#d2d2d2;left:846px;letter-spacing:0.000px;">文件</span>
<span class="t" style="top:79.5px;font-size:11px;line-height:15px;color:#d2d2d2;left:882px;letter-spacing:0.000px;">编辑</span>
<span class="t" style="top:79.5px;font-size:11px;line-height:15px;color:#d2d2d2;left:918px;letter-spacing:0.000px;">查看</span>
<span class="t" style="top:79.5px;font-size:11px;line-height:15px;color:#d2d2d2;left:954px;letter-spacing:0.000px;">对象</span>
<span class="t" style="top:79.5px;font-size:11px;line-height:15px;color:#d2d2d2;left:990px;letter-spacing:0.000px;">标签</span>
<span class="t" style="top:79.5px;font-size:11px;line-height:15px;color:#d2d2d2;left:1026px;letter-spacing:0.000px;">书签</span>
<svg style="left:1294px;top:79px;" width="14" height="16" viewBox="0 0 14 16"><circle cx="5" cy="5.5" r="3.8" fill="none" stroke="#1e1e1e" stroke-width="1.3"/><path d="M7.5 8.5L12 15" stroke="#1e1e1e" stroke-width="2"/></svg>
<svg style="left:1311px;top:79px;" width="16" height="16" viewBox="0 0 16 16"><path d="M8 1.500l6.200 6.500h-2.200v6.500h-8v-6.500h-2.200z" fill="none" stroke="#151515" stroke-width="1.900" stroke-linejoin="miter"/></svg>
<svg style="left:1332px;top:83px;" width="14" height="8" viewBox="0 0 14 8"><path d="M1 4q6-6 12 0-6 6-12 0z" fill="none" stroke="#2a2a2a" stroke-width="1"/></svg>
<svg style="left:1351px;top:80px;" width="12" height="15" viewBox="0 0 12 15"><rect x=".5" y="1" width="11" height="13.500" fill="none" stroke="#151515" stroke-width="1"/><path d="M.5 1.500h11" stroke="#151515" stroke-width="2.500"/><path d="M6 5.500v6M3 8.500h6" stroke="#151515" stroke-width="1.300"/></svg>
<div style="left:820px;top:98px;width:547px;height:1px;background:#333"></div>
<div style="left:820px;top:99px;width:547px;height:1px;background:#5a5a5a"></div>
<div style="left:821px;top:100px;width:545px;height:277px;background:#484848;border:1px solid #3c3c3c;border-right-color:#5c5c5c;border-bottom-color:#5c5c5c"></div>
<div style="left:822px;top:101px;width:1542px;height:20px;background:#555555;width:542px"></div>
<div style="left:822px;top:121px;width:1542px;height:20px;background:#4b4b4b;width:542px"></div>
<div style="left:822px;top:141px;width:1542px;height:20px;background:#555555;width:542px"></div>
<div style="left:938px;top:101px;width:1px;height:275px;background:#3a3a3a"></div>
<div style="left:939px;top:101px;width:1px;height:275px;background:#545454"></div>
<div style="left:977px;top:101px;width:1px;height:275px;background:#3a3a3a"></div>
<div style="left:978px;top:101px;width:1px;height:275px;background:#545454"></div>
<svg style="left:822px;top:100px;" width="40" height="62" viewBox="0 0 40 62"><path d="M6.5 0v50.5h7M6.5 10.5h7M6.5 30.5h7" stroke="#b8b8b8" stroke-width="1" fill="none"/></svg>
<svg style="left:835px;top:102px;" width="18" height="18" viewBox="0 0 18 18"><path d="M9.0 0.5L16.4 4.8L16.4 13.2L9.0 17.5L1.6 13.2L1.6 4.8z" fill="#f07a7a"/><path d="M9 0.5L16.4 4.75L9 9z" fill="#f5a0a0"/><path d="M9 0.5L1.6 4.75L9 9z" fill="#f28c8c"/><path d="M1.6 13.25L9 17.5L9 9z" fill="#e96060"/><path d="M16.4 13.25L9 17.5L9 9z" fill="#ec6c6c"/><path d="M1.6 6.875L9 4.324999999999999L16.4 6.875L16.4 11.125L9 13.675L1.6 11.125z" fill="#e8262c" opacity="0.75"/><path d="M9 3.500a3.400 3.400 0 0 1 2 6.200v1.800h-4v-1.800A3.400 3.400 0 0 1 9 3.500z" fill="#e8262c" stroke="#8a0a10" stroke-width="0.900"/><rect x="7.700" y="11.500" width="2.600" height="2.200" fill="#8a0a10"/></svg>
<span class="t" style="top:103.0px;font-size:12px;line-height:16px;color:#f5c23a;left:856px;letter-spacing:-0.337px;">RS Dome Light</span>
<svg style="left:835px;top:124px;" width="18" height="14" viewBox="0 0 18 14"><path d="M5 2l12 2.500-4 8.500-12-3z" fill="#8ac8f8" stroke="#4a88c8" stroke-width="0.800"/><path d="M11 3.200l-4 8.300M3 6.500l12 2.500" stroke="#5a98d8" stroke-width="0.700"/></svg>
<span class="t" style="top:123.5px;font-size:11px;line-height:15px;color:#d2d2d2;left:856px;letter-spacing:0.000px;">平面</span>
<svg style="left:836px;top:143px;" width="16" height="16" viewBox="0 0 16 16"><circle cx="8" cy="3.200" r="2.600" fill="#8ac8f8" stroke="#3a78b8" stroke-width="0.600"/><path d="M8 6l5.500 4-1 1.500-2.500-1.500.5 5.500h-5l.5-5.500-2.500 1.500-1-1.500z" fill="#6cb4ea" stroke="#3a78b8" stroke-width="0.600"/></svg>
<span class="t" style="top:143.5px;font-size:11px;line-height:15px;color:#d2d2d2;left:856px;letter-spacing:0.000px;">人偶</span>
<svg style="left:942px;top:105px;" width="40" height="13" viewBox="0 0 40 13"><rect x="0" y="0" width="12" height="12" fill="#7d7d7d"/><path d="M1 11L11 1" stroke="#4a4a4a" stroke-width="1.3"/><circle cx="19" cy="2.5" r="1.9" fill="#777"/><circle cx="19" cy="9.5" r="1.9" fill="#777"/><path d="M25 7l2.5 3.5L33 2.5" stroke="#4fe08a" stroke-width="1.6" fill="none"/></svg>
<svg style="left:942px;top:125px;" width="40" height="13" viewBox="0 0 40 13"><rect x="0" y="0" width="12" height="12" fill="#7d7d7d"/><path d="M1 11L11 1" stroke="#4a4a4a" stroke-width="1.3"/><circle cx="19" cy="2.5" r="1.9" fill="#777"/><circle cx="19" cy="9.5" r="1.9" fill="#777"/><path d="M25 7l2.5 3.5L33 2.5" stroke="#4fe08a" stroke-width="1.6" fill="none"/></svg>
<svg style="left:942px;top:145px;" width="40" height="13" viewBox="0 0 40 13"><rect x="0" y="0" width="12" height="12" fill="#7d7d7d"/><path d="M1 11L11 1" stroke="#4a4a4a" stroke-width="1.3"/><circle cx="19" cy="2.5" r="1.9" fill="#777"/><circle cx="19" cy="9.5" r="1.9" fill="#777"/><path d="M25 7l2.5 3.5L33 2.5" stroke="#4fe08a" stroke-width="1.6" fill="none"/></svg>
<svg style="left:978px;top:101px;" width="20" height="20" viewBox="0 0 20 20"><circle cx="10" cy="10" r="9" fill="#f2f2f2" stroke="#bbb" stroke-width="0.600"/><path d="M3.500 8h11l-3-3M16.500 12h-11l3 3" stroke="#2a2a2a" stroke-width="1.500" fill="none"/></svg>
<svg style="left:978px;top:121px;" width="20" height="20" viewBox="0 0 20 20"><rect x=".5" y=".5" width="19" height="19" fill="#6a5a4a" stroke="#f59a1c" stroke-width="1.200"/><path d="M10.0 1.5L17.4 5.8L17.4 14.2L10.0 18.5L2.6 14.2L2.6 5.8z" fill="#f07a7a"/><path d="M10 1.5L17.4 5.75L10 10z" fill="#f5a0a0"/><path d="M10 1.5L2.6 5.75L10 10z" fill="#f28c8c"/><path d="M2.6 14.25L10 18.5L10 10z" fill="#e96060"/><path d="M17.4 14.25L10 18.5L10 10z" fill="#ec6c6c"/><path d="M2.6 7.875L10 5.324999999999999L17.4 7.875L17.4 12.125L10 14.675L2.6 12.125z" fill="#e8262c" opacity="0.75"/></svg>
<svg style="left:1002px;top:122px;" width="18" height="18" viewBox="0 0 18 18"><defs><radialGradient id="od" cx="35%" cy="35%" r="65%"><stop offset="0" stop-color="#f0b060"/><stop offset="1" stop-color="#8a4a10"/></radialGradient></defs><circle cx="5" cy="5" r="3.400" fill="url(#od)"/><circle cx="12.500" cy="12.500" r="3.800" fill="url(#od)"/></svg>
<svg style="left:1019px;top:121px;" width="20" height="20" viewBox="0 0 20 20"><rect width="20" height="20" fill="#555"/><path d="M0 6L6 0h5L0 11zM0 20L20 0v5L5 20zM12 20l8-8v5l-3 3z" fill="#777"/><circle cx="10" cy="10" r="8.200" fill="#000"/></svg>
<svg style="left:979px;top:142px;" width="18" height="18" viewBox="0 0 18 18"><defs><radialGradient id="od" cx="35%" cy="35%" r="65%"><stop offset="0" stop-color="#f0b060"/><stop offset="1" stop-color="#8a4a10"/></radialGradient></defs><circle cx="5" cy="5" r="3.400" fill="url(#od)"/><circle cx="12.500" cy="12.500" r="3.800" fill="url(#od)"/></svg>
<svg style="left:998px;top:141px;" width="20" height="20" viewBox="0 0 20 20"><defs><radialGradient id="rd" cx="38%" cy="35%" r="65%"><stop offset="0" stop-color="#ff2a2a"/><stop offset="0.700" stop-color="#d80000"/><stop offset="1" stop-color="#7a0000"/></radialGradient></defs><rect width="20" height="20" fill="#555"/><path d="M0 6L6 0h5L0 11zM0 20L20 0v5L5 20zM12 20l8-8v5l-3 3z" fill="#777"/><circle cx="10" cy="10" r="8.200" fill="url(#rd)"/></svg>
<div style="left:1371px;top:74px;width:549px;height:307px;background:#4c4c4c;border:1px solid #5e5e5e;border-bottom-color:#3a3a3a;border-right:none"></div>
<div style="left:1371px;top:51px;width:34px;height:24px;background:linear-gradient(#6b6b6b,#565656);border:1px solid #3a3a3a;border-bottom:none;border-radius:5px 5px 0 0"></div>
<span class="t" style="top:55.5px;font-size:11px;line-height:15px;color:#f5a623;left:1388.0px;transform:translateX(-50%);">属性</span>
<div style="left:1406px;top:53px;width:22px;height:21px;background:#383838;border:1px solid #303030;border-bottom:none;border-radius:4px 4px 0 0"></div>
<span class="t" style="top:56.5px;font-size:11px;line-height:15px;color:#6f6f6f;left:1417.0px;transform:translateX(-50%);">层</span>
<div class="hz" style="left:1377px;top:81px;width:12px;height:11px;"></div>
<span class="t" style="top:79.5px;font-size:11px;line-height:15px;color:#d2d2d2;left:1398px;letter-spacing:0.000px;">模式</span>
<span class="t" style="top:79.5px;font-size:11px;line-height:15px;color:#d2d2d2;left:1434px;letter-spacing:0.000px;">编辑</span>
<span class="t" style="top:79.5px;font-size:11px;line-height:15px;color:#d2d2d2;left:1470px;letter-spacing:0.000px;">用户数据</span>
<svg style="left:1773px;top:80px;" width="18" height="14" viewBox="0 0 18 14"><path d="M1 7l15-6.500-3 6.500 3 6.500z" fill="#151515"/></svg>
<svg style="left:1791px;top:80px;" width="18" height="14" viewBox="0 0 18 14"><path d="M17 7l-15-6.500 3 6.500-3 6.500z" fill="#555" stroke="#5e5e5e" stroke-width="0.500"/></svg>
<svg style="left:1818px;top:79px;" width="14" height="16" viewBox="0 0 14 16"><path d="M7 0l6.500 15.500-6.500-3-6.500 3z" fill="#151515"/></svg>
<svg style="left:1843px;top:79px;" width="14" height="16" viewBox="0 0 14 16"><circle cx="5" cy="5.5" r="3.8" fill="none" stroke="#1e1e1e" stroke-width="1.3"/><path d="M7.5 8.5L12 15" stroke="#1e1e1e" stroke-width="2"/></svg>
<svg style="left:1866px;top:79px;" width="12" height="16" viewBox="0 0 12 16"><rect x="1" y="7.500" width="10" height="7.500" fill="none" stroke="#151515" stroke-width="1.300"/><path d="M3 7.500v-3a3 3 0 0 1 6-1" stroke="#151515" stroke-width="1.400" fill="none"/><rect x="5.200" y="10" width="1.600" height="3" fill="#151515"/></svg>
<svg style="left:1883px;top:79px;" width="16" height="16" viewBox="0 0 16 16"><circle cx="8" cy="8" r="6.700" fill="none" stroke="#151515" stroke-width="1.300"/><circle cx="8" cy="8" r="3.800" fill="none" stroke="#151515" stroke-width="1.200"/><circle cx="8" cy="8" r="1.400" fill="#151515"/></svg>
<svg style="left:1903px;top:80px;" width="12" height="15" viewBox="0 0 12 15"><rect x=".5" y="1" width="11" height="13.500" fill="none" stroke="#151515" stroke-width="1"/><path d="M.5 1.500h11" stroke="#151515" stroke-width="2.500"/><path d="M6 5.500v6M3 8.500h6" stroke="#151515" stroke-width="1.300"/></svg>
<div style="left:1372px;top:98px;width:548px;height:1px;background:#333"></div>
<div style="left:1372px;top:99px;width:548px;height:1px;background:#5a5a5a"></div>
<svg style="left:1375px;top:101px;" width="20" height="24" viewBox="0 0 20 24"><path d="M10 1l9 5.500v11l-9 5.500-9-5.500v-11z" fill="#ee7070"/><path d="M10 1l9 5.500-9 4.500-9-4.500z" fill="#f6a8a8"/><path d="M1 9l9 4.500 9-4.500v4l-9 5-9-5z" fill="#e8262c"/><path d="M1 15l9 5 9-5v2.500l-9 5.500-9-5.500z" fill="#f08a8a"/></svg>
<span class="t" style="top:105.0px;font-size:12px;line-height:16px;color:#d2d2d2;left:1400px;letter-spacing:-0.063px;">Redshift Object [Redshift Object]</span>
<div class="grp" style="left:1374px;top:127px;width:498px;height:20px;"><div class="btn" style="left:-1px;width:71px;border-left:none;"></div><div class="btn" style="left:70px;width:71px;border-left:1px solid #333;"></div><div class="btn" style="left:141px;width:71px;border-left:1px solid #333;"></div><div class="btn sel" style="left:212px;width:71px;border-left:1px solid #333;"></div><div class="btn" style="left:283px;width:71px;border-left:1px solid #333;"></div><div class="btn" style="left:354px;width:71px;border-left:1px solid #333;"></div><div class="btn" style="left:425px;width:71px;border-left:1px solid #333;"></div></div>
<span class="t" style="top:129.0px;font-size:11px;line-height:15px;color:#d2d2d2;left:1398.5px;letter-spacing:0.000px;">基本</span>
<span class="t" style="top:128.5px;font-size:12px;line-height:16px;color:#d2d2d2;left:1459.0px;letter-spacing:-0.013px;">Visibility</span>
<span class="t" style="top:128.5px;font-size:12px;line-height:16px;color:#d2d2d2;left:1526.0px;letter-spacing:-0.211px;">Geometry</span>
<span class="t" style="top:128.5px;font-size:12px;line-height:16px;color:#1a1a1a;left:1607.0px;letter-spacing:0.197px;">Matte</span>
<span class="t" style="top:128.5px;font-size:12px;line-height:16px;color:#d2d2d2;left:1669.0px;letter-spacing:-0.113px;">Object ID</span>
<span class="t" style="top:128.5px;font-size:12px;line-height:16px;color:#d2d2d2;left:1733.0px;letter-spacing:0.209px;">Motion Blur</span>
<span class="t" style="top:128.5px;font-size:12px;line-height:16px;color:#d2d2d2;left:1810.5px;letter-spacing:-0.151px;">Exclusion</span>
<div style="left:1374px;top:147px;width:527px;height:229px;background:#515151"></div>
<div style="left:1374px;top:147px;width:527px;height:10px;overflow:hidden"><svg style="left:10px;top:-3px" width="14" height="14"><circle cx="7" cy="7" r="5.6" fill="#7c7c7c" stroke="#2e2e2e" stroke-width="1.6"/></svg><span class="t" style="left:28px;top:-4px;font-size:12px;line-height:16px;color:#d2d2d2;letter-spacing:-0.1px">Include in Puzzle-Mattes</span><div style="left:163px;top:-1px;width:11px;height:9px;background:#7a7a7a;border:1px solid #333;border-radius:2px"></div></div>
<svg style="left:1384px;top:166px;" width="14" height="14" viewBox="0 0 14 14"><circle cx="7" cy="7" r="5.6" fill="#7c7c7c" stroke="#2e2e2e" stroke-width="1.6"/><circle cx="7" cy="7" r="6.6" fill="none" stroke="#666" stroke-width="0.7"/></svg>
<span class="t" style="top:165.0px;font-size:12px;line-height:16px;color:#d2d2d2;left:1402px;letter-spacing:0.059px;">Alpha</span>
<svg style="left:1438px;top:177px;" width="92" height="2" viewBox="0 0 92 2"><rect x="0.0" y="0" width="1" height="1" fill="#b5b5b5"/><rect x="4.6" y="0" width="1" height="1" fill="#b5b5b5"/><rect x="9.2" y="0" width="1" height="1" fill="#b5b5b5"/><rect x="13.8" y="0" width="1" height="1" fill="#b5b5b5"/><rect x="18.4" y="0" width="1" height="1" fill="#b5b5b5"/><rect x="23.0" y="0" width="1" height="1" fill="#b5b5b5"/><rect x="27.6" y="0" width="1" height="1" fill="#b5b5b5"/><rect x="32.2" y="0" width="1" height="1" fill="#b5b5b5"/><rect x="36.8" y="0" width="1" height="1" fill="#b5b5b5"/><rect x="41.4" y="0" width="1" height="1" fill="#b5b5b5"/><rect x="46.0" y="0" width="1" height="1" fill="#b5b5b5"/><rect x="50.6" y="0" width="1" height="1" fill="#b5b5b5"/><rect x="55.2" y="0" width="1" height="1" fill="#b5b5b5"/><rect x="59.8" y="0" width="1" height="1" fill="#b5b5b5"/><rect x="64.4" y="0" width="1" height="1" fill="#b5b5b5"/><rect x="69.0" y="0" width="1" height="1" fill="#b5b5b5"/><rect x="73.6" y="0" width="1" height="1" fill="#b5b5b5"/><rect x="78.2" y="0" width="1" height="1" fill="#b5b5b5"/><rect x="82.8" y="0" width="1" height="1" fill="#b5b5b5"/><rect x="87.4" y="0" width="1" height="1" fill="#b5b5b5"/></svg>
<div class="fld" style="left:1537px;top:163px;width:66px;height:19px;border-radius:3px 0 0 3px"></div>
<span class="t" style="top:165.0px;font-size:12px;line-height:16px;color:#d2d2d2;left:1544px;">1</span>
<svg style="left:1595px;top:168px;" width="6" height="10" viewBox="0 0 6 10"><path d="M0.5 4l2.5-3.5L5.5 4zM0.5 6l2.5 3.5L5.5 6z" fill="#bdbdbd"/></svg>
<div style="left:1603px;top:165px;width:288px;height:15px;background:#858585;border:1px solid #2e2e2e;border-left:none;border-radius:0 3px 3px 0"></div>
<div style="left:1888px;top:166px;width:2px;height:13px;background:#f5a623"></div>
<div style="left:1747px;top:176px;width:1px;height:3px;background:#c78a1e"></div>
<svg style="left:1384px;top:189px;" width="14" height="14" viewBox="0 0 14 14"><circle cx="7" cy="7" r="5.6" fill="#7c7c7c" stroke="#2e2e2e" stroke-width="1.6"/><circle cx="7" cy="7" r="6.6" fill="none" stroke="#666" stroke-width="0.7"/></svg>
<span class="t" style="top:188.0px;font-size:12px;line-height:16px;color:#d2d2d2;left:1402px;letter-spacing:-0.232px;">Reflection Scale</span>
<svg style="left:1490px;top:200px;" width="40" height="2" viewBox="0 0 40 2"><rect x="0.0" y="0" width="1" height="1" fill="#b5b5b5"/><rect x="4.6" y="0" width="1" height="1" fill="#b5b5b5"/><rect x="9.2" y="0" width="1" height="1" fill="#b5b5b5"/><rect x="13.8" y="0" width="1" height="1" fill="#b5b5b5"/><rect x="18.4" y="0" width="1" height="1" fill="#b5b5b5"/><rect x="23.0" y="0" width="1" height="1" fill="#b5b5b5"/><rect x="27.6" y="0" width="1" height="1" fill="#b5b5b5"/><rect x="32.2" y="0" width="1" height="1" fill="#b5b5b5"/></svg>
<div class="fld" style="left:1537px;top:186px;width:66px;height:19px;border-radius:3px 0 0 3px"></div>
<span class="t" style="top:188.0px;font-size:12px;line-height:16px;color:#d2d2d2;left:1544px;">1</span>
<svg style="left:1595px;top:191px;" width="6" height="10" viewBox="0 0 6 10"><path d="M0.5 4l2.5-3.5L5.5 4zM0.5 6l2.5 3.5L5.5 6z" fill="#bdbdbd"/></svg>
<div style="left:1603px;top:188px;width:288px;height:15px;background:#858585;border:1px solid #2e2e2e;border-left:none;border-radius:0 3px 3px 0"></div>
<div style="left:1888px;top:189px;width:2px;height:13px;background:#f5a623"></div>
<div style="left:1747px;top:199px;width:1px;height:3px;background:#c78a1e"></div>
<svg style="left:1384px;top:212px;" width="14" height="14" viewBox="0 0 14 14"><circle cx="7" cy="7" r="5.6" fill="#7c7c7c" stroke="#2e2e2e" stroke-width="1.6"/><circle cx="7" cy="7" r="6.6" fill="none" stroke="#666" stroke-width="0.7"/></svg>
<span class="t" style="top:211.0px;font-size:12px;line-height:16px;color:#d2d2d2;left:1402px;letter-spacing:-0.253px;">Refraction Scale</span>
<svg style="left:1491px;top:223px;" width="39" height="2" viewBox="0 0 39 2"><rect x="0.0" y="0" width="1" height="1" fill="#b5b5b5"/><rect x="4.6" y="0" width="1" height="1" fill="#b5b5b5"/><rect x="9.2" y="0" width="1" height="1" fill="#b5b5b5"/><rect x="13.8" y="0" width="1" height="1" fill="#b5b5b5"/><rect x="18.4" y="0" width="1" height="1" fill="#b5b5b5"/><rect x="23.0" y="0" width="1" height="1" fill="#b5b5b5"/><rect x="27.6" y="0" width="1" height="1" fill="#b5b5b5"/><rect x="32.2" y="0" width="1" height="1" fill="#b5b5b5"/></svg>
<div class="fld" style="left:1537px;top:209px;width:66px;height:19px;border-radius:3px 0 0 3px"></div>
<span class="t" style="top:211.0px;font-size:12px;line-height:16px;color:#d2d2d2;left:1544px;">0</span>
<svg style="left:1595px;top:214px;" width="6" height="10" viewBox="0 0 6 10"><path d="M0.5 4l2.5-3.5L5.5 4zM0.5 6l2.5 3.5L5.5 6z" fill="#bdbdbd"/></svg>
<div style="left:1603px;top:211px;width:288px;height:15px;background:#303030;border:1px solid #2a2a2a;border-left:none;border-radius:0 3px 3px 0"></div>
<div style="left:1604px;top:212px;width:2px;height:13px;background:#f5a623"></div>
<div style="left:1747px;top:222px;width:1px;height:3px;background:#c78a1e"></div>
<svg style="left:1384px;top:235px;" width="14" height="14" viewBox="0 0 14 14"><circle cx="7" cy="7" r="5.6" fill="#7c7c7c" stroke="#2e2e2e" stroke-width="1.6"/><circle cx="7" cy="7" r="6.6" fill="none" stroke="#666" stroke-width="0.7"/></svg>
<span class="t" style="top:234.0px;font-size:12px;line-height:16px;color:#d2d2d2;left:1402px;letter-spacing:-0.268px;">Diffuse Scale</span>
<svg style="left:1474px;top:246px;" width="56" height="2" viewBox="0 0 56 2"><rect x="0.0" y="0" width="1" height="1" fill="#b5b5b5"/><rect x="4.6" y="0" width="1" height="1" fill="#b5b5b5"/><rect x="9.2" y="0" width="1" height="1" fill="#b5b5b5"/><rect x="13.8" y="0" width="1" height="1" fill="#b5b5b5"/><rect x="18.4" y="0" width="1" height="1" fill="#b5b5b5"/><rect x="23.0" y="0" width="1" height="1" fill="#b5b5b5"/><rect x="27.6" y="0" width="1" height="1" fill="#b5b5b5"/><rect x="32.2" y="0" width="1" height="1" fill="#b5b5b5"/><rect x="36.8" y="0" width="1" height="1" fill="#b5b5b5"/><rect x="41.4" y="0" width="1" height="1" fill="#b5b5b5"/><rect x="46.0" y="0" width="1" height="1" fill="#b5b5b5"/><rect x="50.6" y="0" width="1" height="1" fill="#b5b5b5"/></svg>
<div class="fld" style="left:1537px;top:232px;width:66px;height:19px;border-radius:3px 0 0 3px"></div>
<span class="t" style="top:234.0px;font-size:12px;line-height:16px;color:#d2d2d2;left:1544px;">0</span>
<svg style="left:1595px;top:237px;" width="6" height="10" viewBox="0 0 6 10"><path d="M0.5 4l2.5-3.5L5.5 4zM0.5 6l2.5 3.5L5.5 6z" fill="#bdbdbd"/></svg>
<div style="left:1603px;top:234px;width:288px;height:15px;background:#303030;border:1px solid #2a2a2a;border-left:none;border-radius:0 3px 3px 0"></div>
<div style="left:1604px;top:235px;width:2px;height:13px;background:#f5a623"></div>
<div style="left:1747px;top:245px;width:1px;height:3px;background:#c78a1e"></div>
<div style="left:1374px;top:260px;width:527px;height:18px;background:#6b6b6b"></div>
<svg style="left:1385px;top:267px;" width="8" height="5" viewBox="0 0 8 5"><path d="M0 0h8l-4 4.5z" fill="#e0e0e0"/></svg>
<span class="t" style="top:261.0px;font-size:12px;line-height:16px;color:#e0e0e0;left:1394px;letter-spacing:-0.229px;">Shadow</span>
<svg style="left:1384px;top:284px;" width="14" height="14" viewBox="0 0 14 14"><circle cx="7" cy="7" r="5.6" fill="#7c7c7c" stroke="#2e2e2e" stroke-width="1.6"/><circle cx="7" cy="7" r="6.6" fill="none" stroke="#666" stroke-width="0.7"/></svg>
<span class="t" style="top:283.0px;font-size:12px;line-height:16px;color:#d2d2d2;left:1402px;letter-spacing:-0.292px;">Enabled</span>
<svg style="left:1448px;top:295px;" width="112" height="2" viewBox="0 0 112 2"><rect x="0.0" y="0" width="1" height="1" fill="#b5b5b5"/><rect x="4.6" y="0" width="1" height="1" fill="#b5b5b5"/><rect x="9.2" y="0" width="1" height="1" fill="#b5b5b5"/><rect x="13.8" y="0" width="1" height="1" fill="#b5b5b5"/><rect x="18.4" y="0" width="1" height="1" fill="#b5b5b5"/><rect x="23.0" y="0" width="1" height="1" fill="#b5b5b5"/><rect x="27.6" y="0" width="1" height="1" fill="#b5b5b5"/><rect x="32.2" y="0" width="1" height="1" fill="#b5b5b5"/><rect x="36.8" y="0" width="1" height="1" fill="#b5b5b5"/><rect x="41.4" y="0" width="1" height="1" fill="#b5b5b5"/><rect x="46.0" y="0" width="1" height="1" fill="#b5b5b5"/><rect x="50.6" y="0" width="1" height="1" fill="#b5b5b5"/><rect x="55.2" y="0" width="1" height="1" fill="#b5b5b5"/><rect x="59.8" y="0" width="1" height="1" fill="#b5b5b5"/><rect x="64.4" y="0" width="1" height="1" fill="#b5b5b5"/><rect x="69.0" y="0" width="1" height="1" fill="#b5b5b5"/><rect x="73.6" y="0" width="1" height="1" fill="#b5b5b5"/><rect x="78.2" y="0" width="1" height="1" fill="#b5b5b5"/><rect x="82.8" y="0" width="1" height="1" fill="#b5b5b5"/><rect x="87.4" y="0" width="1" height="1" fill="#b5b5b5"/><rect x="92.0" y="0" width="1" height="1" fill="#b5b5b5"/><rect x="96.6" y="0" width="1" height="1" fill="#b5b5b5"/><rect x="101.2" y="0" width="1" height="1" fill="#b5b5b5"/><rect x="105.8" y="0" width="1" height="1" fill="#b5b5b5"/></svg>
<div style="left:1563px;top:285px;width:13px;height:12px;background:#3a3a3a;border:1px solid #2a2a2a;border-radius:2px"></div>
<svg style="left:1563px;top:283px;" width="16" height="14" viewBox="0 0 16 14"><path d="M3 7l3 4.5L12 1.5" stroke="#e8e8e8" stroke-width="2" fill="none"/></svg>
<svg style="left:1384px;top:305px;" width="14" height="14" viewBox="0 0 14 14"><circle cx="7" cy="7" r="5.6" fill="#7c7c7c" stroke="#2e2e2e" stroke-width="1.6"/><circle cx="7" cy="7" r="6.6" fill="none" stroke="#666" stroke-width="0.7"/></svg>
<span class="t" style="top:304.0px;font-size:12px;line-height:16px;color:#d2d2d2;left:1402px;letter-spacing:-0.212px;">Receive Shadows from Mattes</span>
<div style="left:1563px;top:306px;width:13px;height:12px;background:#3a3a3a;border:1px solid #2a2a2a;border-radius:2px"></div>
<svg style="left:1563px;top:304px;" width="16" height="14" viewBox="0 0 16 14"><path d="M3 7l3 4.5L12 1.5" stroke="#e8e8e8" stroke-width="2" fill="none"/></svg>
<svg style="left:1384px;top:326px;" width="14" height="14" viewBox="0 0 14 14"><circle cx="7" cy="7" r="5.6" fill="#7c7c7c" stroke="#2e2e2e" stroke-width="1.6"/><circle cx="7" cy="7" r="6.6" fill="none" stroke="#666" stroke-width="0.7"/></svg>
<span class="t" style="top:325.0px;font-size:12px;line-height:16px;color:#d2d2d2;left:1402px;letter-spacing:0.090px;">Affects Alpha</span>
<svg style="left:1478px;top:337px;" width="82" height="2" viewBox="0 0 82 2"><rect x="0.0" y="0" width="1" height="1" fill="#b5b5b5"/><rect x="4.6" y="0" width="1" height="1" fill="#b5b5b5"/><rect x="9.2" y="0" width="1" height="1" fill="#b5b5b5"/><rect x="13.8" y="0" width="1" height="1" fill="#b5b5b5"/><rect x="18.4" y="0" width="1" height="1" fill="#b5b5b5"/><rect x="23.0" y="0" width="1" height="1" fill="#b5b5b5"/><rect x="27.6" y="0" width="1" height="1" fill="#b5b5b5"/><rect x="32.2" y="0" width="1" height="1" fill="#b5b5b5"/><rect x="36.8" y="0" width="1" height="1" fill="#b5b5b5"/><rect x="41.4" y="0" width="1" height="1" fill="#b5b5b5"/><rect x="46.0" y="0" width="1" height="1" fill="#b5b5b5"/><rect x="50.6" y="0" width="1" height="1" fill="#b5b5b5"/><rect x="55.2" y="0" width="1" height="1" fill="#b5b5b5"/><rect x="59.8" y="0" width="1" height="1" fill="#b5b5b5"/><rect x="64.4" y="0" width="1" height="1" fill="#b5b5b5"/><rect x="69.0" y="0" width="1" height="1" fill="#b5b5b5"/><rect x="73.6" y="0" width="1" height="1" fill="#b5b5b5"/></svg>
<div style="left:1563px;top:327px;width:13px;height:12px;background:#b5b5b5;border:1px solid #3a3a3a;border-radius:3px"></div>
<svg style="left:1384px;top:347px;" width="14" height="14" viewBox="0 0 14 14"><circle cx="7" cy="7" r="5.6" fill="#7c7c7c" stroke="#2e2e2e" stroke-width="1.6"/><circle cx="7" cy="7" r="6.6" fill="none" stroke="#666" stroke-width="0.7"/></svg>
<span class="t" style="top:346.0px;font-size:12px;line-height:16px;color:#d2d2d2;left:1402px;letter-spacing:-0.138px;">Color</span>
<svg style="left:1436px;top:358px;" width="112" height="2" viewBox="0 0 112 2"><rect x="0.0" y="0" width="1" height="1" fill="#b5b5b5"/><rect x="4.6" y="0" width="1" height="1" fill="#b5b5b5"/><rect x="9.2" y="0" width="1" height="1" fill="#b5b5b5"/><rect x="13.8" y="0" width="1" height="1" fill="#b5b5b5"/><rect x="18.4" y="0" width="1" height="1" fill="#b5b5b5"/><rect x="23.0" y="0" width="1" height="1" fill="#b5b5b5"/><rect x="27.6" y="0" width="1" height="1" fill="#b5b5b5"/><rect x="32.2" y="0" width="1" height="1" fill="#b5b5b5"/><rect x="36.8" y="0" width="1" height="1" fill="#b5b5b5"/><rect x="41.4" y="0" width="1" height="1" fill="#b5b5b5"/><rect x="46.0" y="0" width="1" height="1" fill="#b5b5b5"/><rect x="50.6" y="0" width="1" height="1" fill="#b5b5b5"/><rect x="55.2" y="0" width="1" height="1" fill="#b5b5b5"/><rect x="59.8" y="0" width="1" height="1" fill="#b5b5b5"/><rect x="64.4" y="0" width="1" height="1" fill="#b5b5b5"/><rect x="69.0" y="0" width="1" height="1" fill="#b5b5b5"/><rect x="73.6" y="0" width="1" height="1" fill="#b5b5b5"/><rect x="78.2" y="0" width="1" height="1" fill="#b5b5b5"/><rect x="82.8" y="0" width="1" height="1" fill="#b5b5b5"/><rect x="87.4" y="0" width="1" height="1" fill="#b5b5b5"/><rect x="92.0" y="0" width="1" height="1" fill="#b5b5b5"/><rect x="96.6" y="0" width="1" height="1" fill="#b5b5b5"/><rect x="101.2" y="0" width="1" height="1" fill="#b5b5b5"/><rect x="105.8" y="0" width="1" height="1" fill="#b5b5b5"/></svg>
<svg style="left:1555px;top:347px;" width="5" height="8" viewBox="0 0 5 8"><path d="M0 0l4 3.5L0 7z" fill="#222"/></svg>
<div style="left:1563px;top:347px;width:30px;height:14px;background:#000;border:1px solid #2a2a2a"></div>
<div style="left:1374px;top:366px;width:527px;height:10px;overflow:hidden"><svg style="left:10px;top:4px" width="14" height="14"><circle cx="7" cy="7" r="5.6" fill="#7c7c7c" stroke="#2e2e2e" stroke-width="1.6"/></svg><span class="t" style="left:28px;top:3px;font-size:12px;line-height:16px;color:#d2d2d2">Transparency</span><div class="fld" style="left:189px;top:3px;width:66px;height:19px"></div><span class="t" style="left:196px;top:5px;font-size:12px;line-height:16px;color:#d2d2d2">0</span><div style="left:255px;top:5px;width:262px;height:15px;background:#303030;border:1px solid #2a2a2a"></div><div style="left:256px;top:5px;width:2px;height:13px;background:#f5a623"></div></div>
<div style="left:1378px;top:314px;width:232px;height:32px;border:2px solid #e8242c"></div>
<svg style="left:1630px;top:290px;" width="100" height="40" viewBox="0 0 100 40"><path d="M96 6.5L5 33.5" stroke="#e8242c" stroke-width="1.3" fill="none"/><path d="M4 34l7-4.5 1 3.5z" fill="#e8242c"/></svg>
<div style="left:1904px;top:148px;width:10px;height:228px;background:#3c3c3c;border-radius:5px"></div>
<div style="left:1905px;top:243px;width:8px;height:112px;background:#5e5e5e;border-radius:4px"></div>
<svg style="left:1905px;top:150px;" width="8" height="10" viewBox="0 0 8 10"><path d="M4 1L7.5 9L4 7L0.5 9z" fill="#bbb"/></svg>
<svg style="left:1905px;top:364px;" width="8" height="10" viewBox="0 0 8 10"><path d="M4 9L7.5 1L4 3L0.5 1z" fill="#bbb"/></svg>
<div style="left:820px;top:382px;width:1100px;height:19px;background:#333"></div>
<div style="left:820px;top:401px;width:1100px;height:20px;background:#494949"></div>
<div style="left:820px;top:421px;width:1100px;height:1px;background:#686868"></div>
<div style="left:820px;top:422px;width:1100px;height:60px;background:#484848"></div>
<div style="left:820px;top:482px;width:1099px;height:511px;background:#333"></div>
<div style="left:916px;top:482px;width:908px;height:511px;background:#000"></div>
<div class="dd" style="left:1225px;top:454px;width:26px;height:18px;"></div>
<svg style="left:1241px;top:461px;" width="8" height="5" viewBox="0 0 8 5"><path d="M0 0h7l-3.5 4z" fill="#ddd"/></svg>
<svg style="left:1260px;top:449px;" width="22" height="28" viewBox="0 0 22 28"><rect x="2" y="11" width="18" height="15" rx="2" fill="#6e6e6e"/><path d="M6 11v-3.500a5 5 0 0 1 10 0v3.500" stroke="#6e6e6e" stroke-width="3" fill="none"/><circle cx="11" cy="18.500" r="2.200" fill="#484848"/></svg>
<svg style="left:1294px;top:450px;" width="26" height="26" viewBox="0 0 26 26"><rect x="1.0" y="1.0" width="7" height="7" rx="1.200" fill="#6e6e6e"/><rect x="1.0" y="9.5" width="7" height="7" rx="1.200" fill="#6e6e6e"/><rect x="1.0" y="18.0" width="7" height="7" rx="1.200" fill="#6e6e6e"/><rect x="9.5" y="1.0" width="7" height="7" rx="1.200" fill="#6e6e6e"/><rect x="9.5" y="9.5" width="7" height="7" rx="1.200" fill="#6e6e6e"/><rect x="9.5" y="18.0" width="7" height="7" rx="1.200" fill="#6e6e6e"/><rect x="18.0" y="1.0" width="7" height="7" rx="1.200" fill="#6e6e6e"/><rect x="18.0" y="9.5" width="7" height="7" rx="1.200" fill="#6e6e6e"/><rect x="18.0" y="18.0" width="7" height="7" rx="1.200" fill="#6e6e6e"/></svg>
<svg style="left:1330px;top:450px;" width="26" height="26" viewBox="0 0 26 26"><g transform="rotate(0 13 13)"><path d="M13 1v24M9.500 3.500l3.500 3.500 3.500-3.500M9.500 22.500l3.500-3.500 3.500 3.500" stroke="#6e6e6e" stroke-width="2" fill="none"/></g><g transform="rotate(60 13 13)"><path d="M13 1v24M9.500 3.500l3.500 3.500 3.500-3.500M9.500 22.500l3.500-3.500 3.500 3.500" stroke="#6e6e6e" stroke-width="2" fill="none"/></g><g transform="rotate(120 13 13)"><path d="M13 1v24M9.500 3.500l3.500 3.500 3.500-3.500M9.500 22.500l3.500-3.500 3.500 3.500" stroke="#6e6e6e" stroke-width="2" fill="none"/></g></svg>
<svg style="left:1369px;top:450px;" width="26" height="26" viewBox="0 0 26 26"><circle cx="13" cy="13" r="10.800" fill="none" stroke="#6e6e6e" stroke-width="2.400"/></svg>
<svg style="left:1419px;top:450px;" width="26" height="26" viewBox="0 0 26 26"><path d="M2 6v18h18" stroke="#6e6e6e" stroke-width="2.400" fill="none"/><rect x="6" y="1" width="19" height="19" rx="2" fill="#6e6e6e"/><path d="M8.500 16.500l4.500-6 3.500 4 2.500-3 3.500 5z" fill="#484848"/></svg>
<svg style="left:1455px;top:450px;" width="26" height="26" viewBox="0 0 26 26"><path d="M2 6v18h18" stroke="#6e6e6e" stroke-width="2.400" fill="none"/><rect x="6" y="1" width="19" height="19" rx="2" fill="#6e6e6e"/><path d="M15.500 5v11M10 10.500h11" stroke="#484848" stroke-width="2.600"/></svg>
<svg style="left:1491px;top:450px;" width="26" height="26" viewBox="0 0 26 26"><path d="M2 6v18h18" stroke="#6e6e6e" stroke-width="2.400" fill="none"/><rect x="6" y="1" width="19" height="19" rx="2" fill="#6e6e6e"/><text x="15.500" y="14.500" font-family="Liberation Sans,sans-serif" font-size="10" font-weight="bold" fill="#484848" text-anchor="middle">PV</text></svg>
<svg style="left:1526px;top:449px;" width="26" height="28" viewBox="0 0 26 28"><path d="M3 3h13v3M3 3v19h4" stroke="#6e6e6e" stroke-width="2.400" fill="none" stroke-linejoin="round"/><path d="M8 7h10l6 6v14h-16z" fill="#6e6e6e"/><path d="M17.500 7.500v6h6" fill="#484848"/></svg>
<svg style="left:1402px;top:460px;" width="9" height="6" viewBox="0 0 9 6"><path d="M0 0h9l-4.5 5z" fill="#d0d0d0"/></svg>
<div class="fld" style="left:1717px;top:454px;width:59px;height:18px;"></div>
<span class="t" style="top:455.5px;font-size:12px;line-height:16px;color:#dcdcdc;left:1721px;font-family:'Liberation Mono','Noto Serif CJK SC',monospace;letter-spacing:-1.203px;">100 %</span>
<svg style="left:1764px;top:458px;" width="6" height="11" viewBox="0 0 6 11"><path d="M0.5 4l2.5-3.5L5.5 4zM0.5 7l2.5 3.5L5.5 7z" fill="#9a9a9a"/></svg>
<div class="dd" style="left:1780px;top:454px;width:102px;height:18px;"></div>
<span class="t" style="top:455.5px;font-size:12px;line-height:16px;color:#e6e6e6;left:1785px;font-family:'Liberation Mono','Noto Serif CJK SC',monospace;letter-spacing:-1.202px;">Fit Window</span>
<svg style="left:1869px;top:461px;" width="9" height="6" viewBox="0 0 9 6"><path d="M0 0h9l-4.5 5z" fill="#dedede"/></svg>
<svg style="left:1888px;top:449px;" width="28" height="28" viewBox="0 0 28 28"><g transform="translate(14,14)"><rect x="-3" y="-13.500" width="6" height="7" rx="1" fill="#6e6e6e" transform="rotate(0)"/><rect x="-3" y="-13.500" width="6" height="7" rx="1" fill="#6e6e6e" transform="rotate(45)"/><rect x="-3" y="-13.500" width="6" height="7" rx="1" fill="#6e6e6e" transform="rotate(90)"/><rect x="-3" y="-13.500" width="6" height="7" rx="1" fill="#6e6e6e" transform="rotate(135)"/><rect x="-3" y="-13.500" width="6" height="7" rx="1" fill="#6e6e6e" transform="rotate(180)"/><rect x="-3" y="-13.500" width="6" height="7" rx="1" fill="#6e6e6e" transform="rotate(225)"/><rect x="-3" y="-13.500" width="6" height="7" rx="1" fill="#6e6e6e" transform="rotate(270)"/><rect x="-3" y="-13.500" width="6" height="7" rx="1" fill="#6e6e6e" transform="rotate(315)"/><circle r="9.500" fill="#6e6e6e"/><circle r="4.200" fill="#484848"/></g></svg>
<svg style="left:0;top:0" width="1920" height="1040" viewBox="0 0 1920 1040"><g transform="translate(1358,700) scale(1.0)"><defs><linearGradient id="fg4" x1="0" y1="0" x2="0" y2="1"><stop offset="0" stop-color="#480000"/><stop offset="1" stop-color="#300000"/></linearGradient></defs><g fill="url(#fg4)"><path d="M-7 118L-1 118L0 167L-5 167Z"/><path d="M1 119L8 119L8.500 167L2 167Z"/><path d="M-4.500 166L8.500 166L7.500 193L-2.500 193Z"/><ellipse cx="2.500" cy="205" rx="5" ry="9"/></g><path d="M-34.600 170L0 188M4 190L45 210" stroke="#300000" stroke-width="3.200" stroke-linecap="round"/><g fill="#e00000"><ellipse cx="0" cy="9.300" rx="6" ry="9.300"/><rect x="-3" y="17.500" width="6.500" height="6"/><path d="M-5.500 23.500Q0 21 5.500 23.500L6.200 38Q0 42 -5.700 38Z"/><rect x="-5" y="39.500" width="10.500" height="8" rx="2"/><path d="M-6 47L7 47L7.800 58Q0.500 63 -6.800 58Z"/><path d="M-8 59L-1.300 60L-1.500 85L-2 108.500L-7 108.500L-8.200 85Z"/><path d="M0 61L8 60L8.600 86L8.200 112.500L2.200 112.500L1 86Z"/><path d="M-2 106.500L-1.500 110L-13 114L-14.500 112Z"/><path d="M8.200 109.500L8.600 113.500L-4 118L-5.500 115.500Z"/><path d="M-3.500 21.500L-5 29.500L-37 16.800L-39 13.500L-36 11.200Z"/><path d="M4.500 25L5.500 32.500L46 44L49 41.500L47 37.800Z"/></g><path d="M3 24.500L5 38L3 41ZM4 48L7 58L3 61ZM-3 62L-2 85L-2.800 107L-4.500 107L-3.800 85ZM6 62L8 86L7.500 112L5.500 112L6.500 86Z" fill="#a80000" opacity="0.550"/></g></svg>
<span class="t" style="top:961.0px;font-size:12px;line-height:16px;color:#ffffff;left:1173.5px;font-family:'Liberation Mono','Noto Serif CJK SC',monospace;letter-spacing:-0.003px;">微信公众号</span>
<span class="t" style="top:961.0px;font-size:12px;line-height:16px;color:#ffffff;left:1233.5px;font-family:'Liberation Mono','Noto Serif CJK SC',monospace;letter-spacing:-1.203px;">:</span>
<span class="t" style="top:961.0px;font-size:12px;line-height:16px;color:#ffffff;left:1245.5px;font-family:'Liberation Mono','Noto Serif CJK SC',monospace;letter-spacing:-0.005px;">野鹿志</span>
<span class="t" style="top:961.0px;font-size:12px;line-height:16px;color:#ffffff;left:1293.5px;font-family:'Liberation Mono','Noto Serif CJK SC',monospace;letter-spacing:-0.008px;">微博</span>
<span class="t" style="top:961.0px;font-size:12px;line-height:16px;color:#ffffff;left:1317.5px;font-family:'Liberation Mono','Noto Serif CJK SC',monospace;letter-spacing:-1.203px;">:</span>
<span class="t" style="top:961.0px;font-size:12px;line-height:16px;color:#ffffff;left:1329.5px;font-family:'Liberation Mono','Noto Serif CJK SC',monospace;letter-spacing:-0.005px;">野鹿志</span>
<span class="t" style="top:961.0px;font-size:12px;line-height:16px;color:#ffffff;left:1377.5px;font-family:'Liberation Mono','Noto Serif CJK SC',monospace;letter-spacing:-0.008px;">作者</span>
<span class="t" style="top:961.0px;font-size:12px;line-height:16px;color:#ffffff;left:1401.5px;font-family:'Liberation Mono','Noto Serif CJK SC',monospace;letter-spacing:-1.203px;">:</span>
<span class="t" style="top:961.0px;font-size:12px;line-height:16px;color:#ffffff;left:1413.5px;font-family:'Liberation Mono','Noto Serif CJK SC',monospace;letter-spacing:-0.004px;">马鹿野郎</span>
<span class="t" style="top:961.0px;font-size:12px;line-height:16px;color:#ffffff;left:1473.5px;font-family:'Liberation Mono','Noto Serif CJK SC',monospace;letter-spacing:-1.203px;">Frame</span>
<span class="t" style="top:961.0px;font-size:12px;line-height:16px;color:#ffffff;left:1515.5px;font-family:'Liberation Mono','Noto Serif CJK SC',monospace;letter-spacing:-1.203px;">0</span>
<span class="t" style="top:961.0px;font-size:12px;line-height:16px;color:#ffffff;left:1533.5px;font-family:'Liberation Mono','Noto Serif CJK SC',monospace;letter-spacing:-1.203px;">0.88s</span>
<div class="hz" style="left:39px;top:783px;width:6px;height:17px;"></div>
<div style="left:49px;top:780px;width:40px;height:23px;background:#333;border:1px solid #2a2a2a;border-radius:3px"></div>
<div style="left:50px;top:780px;width:9px;height:17px;background:#4ce090"></div>
<span class="t" style="top:779.5px;font-size:11px;line-height:15px;color:#4ce090;left:60px;">0</span>
<svg style="left:50px;top:797px;" width="30" height="5" viewBox="0 0 30 5"><path d="M4.5 0v4M11.5 2.5v1.5M19.5 2.5v1.5" stroke="#bbb" stroke-width="1"/></svg>
<div class="hz" style="left:39px;top:811px;width:6px;height:20px;"></div>
<div class="fld" style="left:49px;top:810px;width:40px;height:20px;"></div>
<span class="t" style="top:812.0px;font-size:12px;line-height:16px;color:#cfcfcf;left:53px;letter-spacing:-0.781px;">0 F</span>
<div style="left:40px;top:838px;width:473px;height:179px;border:1px solid #5e5e5e;border-right-color:#3a3a3a;border-bottom-color:#3a3a3a;background:#484848"></div>
<div class="hz" style="left:45px;top:844px;width:12px;height:11px;"></div>
<span class="t" style="top:841.5px;font-size:11px;line-height:15px;color:#d2d2d2;left:66px;letter-spacing:0.000px;">创建</span>
<div style="left:41px;top:861px;width:471px;height:1px;background:#333"></div>
<div style="left:41px;top:862px;width:471px;height:1px;background:#5a5a5a"></div>
<div style="left:42px;top:864px;width:40px;height:44px;background:repeating-linear-gradient(135deg,#5a5a5a 0,#5a5a5a 6px,#777 6px,#777 12px)"></div>
<div style="left:43px;top:865px;width:40px;height:40px;background:#000;border-radius:50%"></div>
<div style="left:42px;top:908px;width:40px;height:17px;background:#f5a623"></div>
<span class="t" style="top:908.5px;font-size:12px;line-height:16px;color:#222;left:43px;letter-spacing:-0.938px;">RS Ma</span>
<div style="left:516px;top:838px;width:300px;height:179px;border:1px solid #5e5e5e;border-right-color:#3a3a3a;border-bottom-color:#3a3a3a;background:#484848"></div>
<div style="left:819px;top:838px;width:1px;height:182px;background:#5a5a5a"></div>
<div class="dd" style="left:531px;top:936px;width:83px;height:18px;"></div>
<span class="t" style="top:937.5px;font-size:11px;line-height:15px;color:#d2d2d2;left:538px;">对象 (相对)</span>
<svg style="left:603px;top:943px;" width="8" height="5" viewBox="0 0 8 5"><path d="M0 0h8l-4 4z" fill="#ddd"/></svg>
<div class="dd" style="left:629px;top:936px;width:84px;height:18px;"></div>
<span class="t" style="top:937.5px;font-size:11px;line-height:15px;color:#d2d2d2;left:636px;letter-spacing:0.000px;">绝对尺寸</span>
<svg style="left:700px;top:943px;" width="8" height="5" viewBox="0 0 8 5"><path d="M0 0h8l-4 4z" fill="#ddd"/></svg>
<div style="left:729px;top:936px;width:83px;height:18px;background:linear-gradient(#707070,#626262);border:1px solid #2c2c2c;border-radius:9px"></div>
<span class="t" style="top:937.5px;font-size:11px;line-height:15px;color:#d2d2d2;left:770px;transform:translateX(-50%);">应用</span>
<div style="left:0px;top:1020px;width:820px;height:1px;background:#5a5a5a"></div>
<div style="left:0px;top:1037px;width:1920px;height:1px;background:#5a5a5a"></div>
<div class="hz" style="left:4px;top:1024px;width:12px;height:11px;"></div>
<span class="t" style="left:0;top:1016px;transform-origin:0 0;transform:rotate(-90deg);font-size:15px;line-height:18px;color:#7c7c7c;font-weight:bold;font-style:italic;letter-spacing:-0.5px">MAXON</span>
<span class="t" style="left:17px;top:1016px;transform-origin:0 0;transform:rotate(-90deg);font-size:16px;line-height:19px;color:#7c7c7c;letter-spacing:0px">CINEMA 4D</span>
<div style="left:76px;top:186px;width:1164px;height:742px;background:#484848;box-shadow:0 0 0 1px rgba(48,48,48,.9),0 2px 16px 2px rgba(0,0,0,.38)"></div>
<div style="left:76px;top:186px;width:1164px;height:30px;background:#fff"></div>
<svg style="left:83px;top:191px;" width="18" height="18" viewBox="0 0 18 18"><defs><radialGradient id="lg" cx="40%" cy="40%" r="60%"><stop offset="0" stop-color="#6a8be0"/><stop offset="0.6" stop-color="#1b2a6b"/><stop offset="1" stop-color="#0a1030"/></radialGradient></defs><circle cx="9" cy="9" r="8" fill="#c9ccd6"/><circle cx="9" cy="9" r="7.3" fill="#e9ebf2"/><circle cx="8.2" cy="9.6" r="5.6" fill="url(#lg)"/><path d="M9 3.5a5.5 5.5 0 0 1 5.5 5.5l-2-.3a3.6 3.6 0 0 0-3.5-3.3z" fill="#f5f6fa"/></svg>
<span class="t" style="top:193.0px;font-size:12px;line-height:16px;color:#000;left:105px;letter-spacing:-0.003px;">图片查看器</span>
<svg style="left:1110px;top:186px;" width="130" height="30" viewBox="0 0 130 30"><path d="M10.5 15.5h10" stroke="#000" stroke-width="1" fill="none"/><path d="M56.5 9.5h9v9h-9z" stroke="#000" stroke-width="1.2" fill="none"/><path d="M102 9l10 10M112 9l-10 10" stroke="#000" stroke-width="1.2" fill="none"/></svg>
<div style="left:76px;top:216px;width:1164px;height:23px;background:#6b6b6b"></div>
<div style="left:76px;top:239px;width:1164px;height:1px;background:#3a3a3a"></div>
<div class="hz" style="left:81px;top:221px;width:12px;height:11px;"></div>
<span class="t" style="top:220.5px;font-size:11px;line-height:15px;color:#a3a3a3;left:102px;letter-spacing:0.000px;">文件</span>
<span class="t" style="top:220.5px;font-size:11px;line-height:15px;color:#a3a3a3;left:138px;letter-spacing:0.000px;">编辑</span>
<span class="t" style="top:220.5px;font-size:11px;line-height:15px;color:#a3a3a3;left:174px;letter-spacing:0.000px;">查看</span>
<span class="t" style="top:220.5px;font-size:11px;line-height:15px;color:#a3a3a3;left:210px;letter-spacing:0.000px;">比较</span>
<span class="t" style="top:220.5px;font-size:11px;line-height:15px;color:#a3a3a3;left:246px;letter-spacing:0.000px;">动画</span>
<svg style="left:1174px;top:219px;" width="14" height="16" viewBox="0 0 14 16"><rect x="1" y="1.500" width="12" height="13.500" fill="none" stroke="#151515" stroke-width="1"/><path d="M1 2h12" stroke="#151515" stroke-width="2.500"/><rect x="7.500" y="3.500" width="5" height="11" fill="#cfcfcf"/><path d="M7 3v12" stroke="#151515" stroke-width="1"/></svg>
<svg style="left:1194px;top:220px;" width="12" height="15" viewBox="0 0 12 15"><rect x=".5" y="1" width="11" height="13.500" fill="none" stroke="#151515" stroke-width="1"/><path d="M.5 1.500h11" stroke="#151515" stroke-width="2.500"/><path d="M6 5.500v6M3 8.500h6" stroke="#151515" stroke-width="1.300"/></svg>
<svg style="left:1210px;top:220px;" width="14" height="14" viewBox="0 0 14 14"><path d="M7 0l2.600 4h-5.200zM7 14l2.600-4h-5.200zM0 7l4-2.600v5.200zM14 7l-4-2.600v5.200z" fill="#1c1c1c"/></svg>
<svg style="left:1225px;top:219px;" width="14" height="16" viewBox="0 0 14 16"><path d="M7 0l4.500 5h-3v6h3l-4.500 5-4.500-5h3v-6h-3z" fill="#1c1c1c"/></svg>
<div class="hz" style="left:77px;top:244px;width:5px;height:23px;"></div>
<div class="grp" style="left:85px;top:242px;width:54px;height:26px;"><div class="btn" style="left:-1px;width:27px;border-left:none;"></div><div class="btn" style="left:26px;width:27px;"></div></div>
<svg style="left:85px;top:243px;" width="27" height="26" viewBox="0 0 27 26"><path d="M3 22l3-10h17l-4 10z" fill="#f0f0f0" stroke="#333" stroke-width="0.800"/><path d="M3 22v-12h5l1.500 2h4" fill="none" stroke="#333" stroke-width="0.800"/><path d="M11 14v-4q0-4.500 5-4.500h1.500v-3l6 4.700-6 4.700v-3h-1.500q-1.500 0-1.500 1.500v3.600z" fill="#f59a3c" stroke="#5a3000" stroke-width="0.700"/></svg>
<svg style="left:112px;top:243px;" width="27" height="26" viewBox="0 0 27 26"><path d="M3 3h17l2 2v16h-19z" fill="#f59a3c" stroke="#5a3000" stroke-width="0.800"/><rect x="6" y="3.500" width="11" height="7.500" fill="#f2f2f2" stroke="#555" stroke-width="0.500"/><rect x="7" y="14.500" width="9" height="6.500" fill="#151515"/><text x="20" y="24" font-family="Liberation Sans,sans-serif" font-size="14" font-weight="bold" fill="#f6f6f6" stroke="#222" stroke-width="0.800" paint-order="stroke" text-anchor="middle">?</text></svg>
<div class="grp" style="left:151px;top:242px;width:26px;height:26px;"><div class="btn" style="left:-1px;width:26px;border-left:none;"></div></div>
<svg style="left:150px;top:243px;" width="27" height="26" viewBox="0 0 27 26"><g opacity="0.550"><path d="M4 9l15-3 .5 3-15 3z" fill="#8a8a8a" stroke="#9a9a9a" stroke-dasharray="2 1.500"/><rect x="4" y="12" width="16" height="10" fill="#7a7a7a" stroke="#909090"/><rect x="14" y="13" width="9" height="9" fill="#8a8a8a" stroke="#a0a0a0"/><path d="M16 15l5 5M21 15l-5 5" stroke="#b0b0b0"/></g></svg>
<div class="grp" style="left:189px;top:242px;width:54px;height:26px;"><div class="btn" style="left:-1px;width:27px;border-left:none;"></div><div class="btn" style="left:26px;width:27px;"></div></div>
<svg style="left:189px;top:243px;" width="27" height="26" viewBox="0 0 27 26"><path d="M4 17h13l3 5h-16z" fill="#ee6a33" stroke="#5a2008" stroke-width="0.700"/><rect x="10" y="3" width="4" height="4" fill="#f4f4f4" stroke="#666" stroke-width="0.400"/><rect x="5.5" y="7.5" width="4" height="4" fill="#f4f4f4" stroke="#666" stroke-width="0.400"/><rect x="10" y="7.5" width="4" height="4" fill="#f4f4f4" stroke="#666" stroke-width="0.400"/><rect x="14.5" y="7.5" width="4" height="4" fill="#f4f4f4" stroke="#666" stroke-width="0.400"/><rect x="19" y="7.5" width="4" height="4" fill="#f4f4f4" stroke="#666" stroke-width="0.400"/><rect x="10" y="12" width="4" height="4" fill="#f4f4f4" stroke="#666" stroke-width="0.400"/><path d="M20.500 10h3v7h2.500l-4 5.500-4-5.500h2.500z" fill="#f4f4f4" stroke="#333" stroke-width="0.700"/></svg>
<svg style="left:216px;top:243px;" width="27" height="26" viewBox="0 0 27 26"><path d="M4 17h13l3 5h-16z" fill="#ee6a33" stroke="#5a2008" stroke-width="0.700"/><circle cx="12" cy="9" r="6.500" fill="#ececec" stroke="#888" stroke-width="0.600"/><path d="M20.500 10h3v7h2.500l-4 5.500-4-5.500h2.500z" fill="#f4f4f4" stroke="#333" stroke-width="0.700"/></svg>
<div class="grp" style="left:255px;top:242px;width:54px;height:26px;"><div class="btn" style="left:-1px;width:27px;border-left:none;"></div><div class="btn sel" style="left:26px;width:27px;"></div></div>
<svg style="left:255px;top:243px;" width="27" height="26" viewBox="0 0 27 26"><g transform="translate(4,3)"><rect x="1.500" y="0" width="11" height="16" rx="1" fill="#ee6a33" stroke="#222" stroke-width="0.800"/><rect x="0" y="2.0" width="2.400" height="1.600" fill="#f4f4f4" stroke="#333" stroke-width="0.400"/><rect x="0" y="5.6" width="2.400" height="1.600" fill="#f4f4f4" stroke="#333" stroke-width="0.400"/><rect x="0" y="9.2" width="2.400" height="1.600" fill="#f4f4f4" stroke="#333" stroke-width="0.400"/><rect x="0" y="12.8" width="2.400" height="1.600" fill="#f4f4f4" stroke="#333" stroke-width="0.400"/></g><path d="M12 12h10l-1 11h-8z" fill="#ee6a33" stroke="#222" stroke-width="0.800"/><path d="M11 12h12M15 10h4" stroke="#222" stroke-width="1.200"/><path d="M14.500 14.500v7M17 14.500v7M19.500 14.500v7" stroke="#7a2a08" stroke-width="1"/></svg>
<svg style="left:282px;top:243px;" width="27" height="26" viewBox="0 0 27 26"><g transform="translate(5,3)"><rect x="1.500" y="0" width="11" height="16" rx="1" fill="#ee6a33" stroke="#222" stroke-width="0.800"/><rect x="0" y="2.0" width="2.400" height="1.600" fill="#f4f4f4" stroke="#333" stroke-width="0.400"/><rect x="0" y="5.6" width="2.400" height="1.600" fill="#f4f4f4" stroke="#333" stroke-width="0.400"/><rect x="0" y="9.2" width="2.400" height="1.600" fill="#f4f4f4" stroke="#333" stroke-width="0.400"/><rect x="0" y="12.8" width="2.400" height="1.600" fill="#f4f4f4" stroke="#333" stroke-width="0.400"/></g><rect x="12" y="12" width="11" height="3.600" rx="1" fill="#f4f4f4" stroke="#222" stroke-width="0.700"/><rect x="12" y="17.500" width="11" height="3.600" rx="1" fill="#f4f4f4" stroke="#222" stroke-width="0.700"/><path d="M26 20v5h-5z" fill="#151515"/></svg>
<div class="grp" style="left:321px;top:242px;width:82px;height:26px;"><div class="btn" style="left:-1px;width:27px;border-left:none;"></div><div class="btn" style="left:26px;width:28px;"></div><div class="btn sel" style="left:54px;width:27px;"></div></div>
<svg style="left:321px;top:243px;" width="27" height="26" viewBox="0 0 27 26"><rect x="1.500" y="1.500" width="24" height="23" fill="none" stroke="#f0f0f0" stroke-width="1.600"/><rect x="4.500" y="4.500" width="18" height="17" fill="#5a5a5a" stroke="#ee6a33" stroke-width="1" stroke-dasharray="2 1"/><path d="M4.500 4.500v17h10" stroke="#ee6a33" stroke-width="1.200" fill="none"/><g transform="translate(13,16)"><rect width="12" height="7.500" fill="#e4e4e4" stroke="#333" stroke-width="0.500"/><path d="M1.500 4q4.500-4.500 9 0-4.500 3.500-9 0z" fill="#fff" stroke="#222" stroke-width="0.700"/><circle cx="6" cy="3.800" r="1.700" fill="#151515"/></g></svg>
<svg style="left:348px;top:243px;" width="27" height="26" viewBox="0 0 27 26"><rect x="1.500" y="1.500" width="24" height="23" fill="none" stroke="#ee6a33" stroke-width="1.600"/><rect x="5" y="5" width="17" height="16" fill="#5a5a5a" stroke="#e8e8e8" stroke-width="1.200"/><g transform="translate(13,16)"><rect width="12" height="7.500" fill="#e4e4e4" stroke="#333" stroke-width="0.500"/><path d="M1.500 4q4.500-4.500 9 0-4.500 3.500-9 0z" fill="#fff" stroke="#222" stroke-width="0.700"/><circle cx="6" cy="3.800" r="1.700" fill="#151515"/></g></svg>
<svg style="left:376px;top:243px;" width="27" height="26" viewBox="0 0 27 26"><circle cx="14" cy="8.500" r="5.500" fill="#ee6a33" stroke="#222" stroke-width="0.600"/><circle cx="10" cy="15.500" r="5.500" fill="#ececec" stroke="#222" stroke-width="0.600"/><circle cx="18" cy="15.500" r="5.500" fill="#ececec" stroke="#222" stroke-width="0.600"/><g transform="translate(13,16)"><rect width="12" height="7.500" fill="#e4e4e4" stroke="#333" stroke-width="0.500"/><path d="M1.500 4q4.500-4.500 9 0-4.500 3.500-9 0z" fill="#fff" stroke="#222" stroke-width="0.700"/><circle cx="6" cy="3.800" r="1.700" fill="#151515"/></g></svg>
<div class="grp" style="left:415px;top:242px;width:82px;height:26px;"><div class="btn" style="left:-1px;width:27px;border-left:none;"></div><div class="btn sel" style="left:26px;width:27px;"></div><div class="btn" style="left:53px;width:28px;"></div></div>
<svg style="left:415px;top:243px;" width="27" height="26" viewBox="0 0 27 26"><rect x="4" y="4" width="19" height="18" rx="1.500" fill="#f0f0f0" stroke="#222" stroke-width="0.800"/><path d="M4 6.500V5.500a1.500 1.500 0 0 1 1.500-1.500h16a1.500 1.500 0 0 1 1.500 1.500v1z" fill="#151515"/><path d="M13.500 6v16" stroke="#222" stroke-width="0.900"/><text x="8.800" y="18" font-family="Liberation Sans,sans-serif" font-size="8.500" font-weight="bold" fill="#ee6a33" stroke="#5a2008" stroke-width="0.300" text-anchor="middle">A</text><text x="18.500" y="18" font-family="Liberation Sans,sans-serif" font-size="8.500" font-weight="bold" fill="#ee6a33" stroke="#5a2008" stroke-width="0.300" text-anchor="middle">B</text></svg>
<svg style="left:442px;top:243px;" width="27" height="26" viewBox="0 0 27 26"><g opacity="0.800"><rect x="4" y="4" width="19" height="18" fill="none" stroke="#a8c0e6" stroke-width="1"/><path d="M13.500 4v18M4 13h19" stroke="#a8c0e6" stroke-width="0.800"/><text x="8.800" y="12" font-family="Liberation Sans,sans-serif" font-size="8" font-weight="bold" fill="#c4d6f2" text-anchor="middle">A</text><text x="18.500" y="12" font-family="Liberation Sans,sans-serif" font-size="8" font-weight="bold" fill="#c4d6f2" text-anchor="middle">B</text><rect x="13" y="15.500" width="11" height="6.500" fill="#9ab4de" stroke="#c4d6f2" stroke-width="0.600"/><path d="M14.500 19q4-4 8 0-4 3-8 0z" fill="#7090c0"/></g></svg>
<svg style="left:470px;top:243px;" width="27" height="26" viewBox="0 0 27 26"><g opacity="0.600"><text x="13.500" y="13" font-family="Liberation Sans,sans-serif" font-size="13" font-weight="bold" fill="#858585" stroke="#8e8e8e" stroke-width="0.400" text-anchor="middle">AB</text><rect x="12" y="15.500" width="11" height="6.500" fill="#7a7a7a" stroke="#9a9a9a" stroke-width="0.700"/><path d="M13.500 19q4-4 8 0-4 3-8 0z" fill="#666"/></g></svg>
<div class="grp" style="left:501px;top:242px;width:54px;height:26px;"><div class="btn" style="left:-1px;width:27px;border-left:none;"></div><div class="btn" style="left:26px;width:27px;"></div></div>
<svg style="left:501px;top:243px;" width="27" height="26" viewBox="0 0 27 26"><text x="17" y="14" font-family="Liberation Sans,sans-serif" font-size="14" font-weight="bold" fill="#ee6a33" stroke="#5a2008" stroke-width="0.400" text-anchor="middle">A</text><path d="M3 19h6v-2l4.500 3.500-4.500 3.500v-2h-6z" fill="#f4f4f4" stroke="#444" stroke-width="0.500"/></svg>
<svg style="left:528px;top:243px;" width="27" height="26" viewBox="0 0 27 26"><text x="18" y="14" font-family="Liberation Sans,sans-serif" font-size="14" font-weight="bold" fill="#ee6a33" stroke="#5a2008" stroke-width="0.400" text-anchor="middle">B</text><path d="M3 19h6v-2l4.500 3.500-4.500 3.500v-2h-6z" fill="#f4f4f4" stroke="#444" stroke-width="0.500"/></svg>
<div class="grp" style="left:559px;top:242px;width:82px;height:26px;"><div class="btn" style="left:-1px;width:27px;border-left:none;"></div><div class="btn" style="left:26px;width:28px;"></div><div class="btn" style="left:54px;width:27px;"></div></div>
<svg style="left:559px;top:243px;" width="27" height="26" viewBox="0 0 27 26"><g opacity="0.750"><rect x="4" y="4" width="19" height="18" rx="1" fill="none" stroke="#858585" stroke-width="1"/><path d="M13.500 4v18" stroke="#858585" stroke-width="0.800"/><text x="8.800" y="16" font-family="Liberation Sans,sans-serif" font-size="7.500" font-weight="bold" fill="#7a7a7a" stroke="#8e8e8e" stroke-width="0.400" text-anchor="middle">A</text><text x="18.500" y="16" font-family="Liberation Sans,sans-serif" font-size="7.500" font-weight="bold" fill="#7a7a7a" stroke="#8e8e8e" stroke-width="0.400" text-anchor="middle"></text><text x="8.800" y="20.500" font-family="Liberation Sans,sans-serif" font-size="7.500" font-weight="bold" fill="#7a7a7a" stroke="#8e8e8e" stroke-width="0.400" text-anchor="middle"> </text><text x="18.500" y="20.500" font-family="Liberation Sans,sans-serif" font-size="7.500" font-weight="bold" fill="#7a7a7a" stroke="#8e8e8e" stroke-width="0.400" text-anchor="middle">B</text></g></svg>
<svg style="left:586px;top:243px;" width="27" height="26" viewBox="0 0 27 26"><g opacity="0.750"><rect x="4" y="4" width="19" height="18" rx="1" fill="none" stroke="#858585" stroke-width="1"/><path d="M13.500 4v18" stroke="#858585" stroke-width="0.800"/><text x="8.800" y="12" font-family="Liberation Sans,sans-serif" font-size="7.500" font-weight="bold" fill="#7a7a7a" stroke="#8e8e8e" stroke-width="0.400" text-anchor="middle">A</text><text x="18.500" y="12" font-family="Liberation Sans,sans-serif" font-size="7.500" font-weight="bold" fill="#7a7a7a" stroke="#8e8e8e" stroke-width="0.400" text-anchor="middle">–</text><text x="8.800" y="20.500" font-family="Liberation Sans,sans-serif" font-size="7.500" font-weight="bold" fill="#7a7a7a" stroke="#8e8e8e" stroke-width="0.400" text-anchor="middle">B</text><text x="18.500" y="20.500" font-family="Liberation Sans,sans-serif" font-size="7.500" font-weight="bold" fill="#7a7a7a" stroke="#8e8e8e" stroke-width="0.400" text-anchor="middle">□</text></g></svg>
<svg style="left:614px;top:243px;" width="27" height="26" viewBox="0 0 27 26"><g opacity="0.750"><rect x="4" y="4" width="19" height="18" rx="1" fill="none" stroke="#858585" stroke-width="1"/><path d="M13.500 4v18" stroke="#858585" stroke-width="0.800"/><text x="8.800" y="12" font-family="Liberation Sans,sans-serif" font-size="7.500" font-weight="bold" fill="#7a7a7a" stroke="#8e8e8e" stroke-width="0.400" text-anchor="middle">A</text><text x="18.500" y="12" font-family="Liberation Sans,sans-serif" font-size="7.500" font-weight="bold" fill="#7a7a7a" stroke="#8e8e8e" stroke-width="0.400" text-anchor="middle">↓</text><text x="8.800" y="20.500" font-family="Liberation Sans,sans-serif" font-size="7.500" font-weight="bold" fill="#7a7a7a" stroke="#8e8e8e" stroke-width="0.400" text-anchor="middle">↑</text><text x="18.500" y="20.500" font-family="Liberation Sans,sans-serif" font-size="7.500" font-weight="bold" fill="#7a7a7a" stroke="#8e8e8e" stroke-width="0.400" text-anchor="middle">B</text></g></svg>
<div style="left:76px;top:270px;width:1164px;height:1px;background:#333"></div>
<div style="left:76px;top:271px;width:1164px;height:1px;background:#5a5a5a"></div>
<div style="left:94px;top:348px;width:820px;height:461px;background:#000"></div>
<svg style="left:0;top:0" width="1920" height="1040" viewBox="0 0 1920 1040"><g transform="translate(493,545.2) scale(0.9)"><defs><linearGradient id="fg5" x1="0" y1="0" x2="0" y2="1"><stop offset="0" stop-color="#5c0000"/><stop offset="1" stop-color="#8a0000"/></linearGradient></defs><g fill="url(#fg5)"><path d="M-7 118L-1 118L0 167L-5 167Z"/><path d="M1 119L8 119L8.500 167L2 167Z"/><path d="M-4.500 166L8.500 166L7.500 193L-2.500 193Z"/><ellipse cx="2.500" cy="205" rx="5" ry="9"/></g><path d="M-34.600 170L0 188M4 190L45 210" stroke="#8a0000" stroke-width="3.200" stroke-linecap="round"/><g fill="#e00000"><ellipse cx="0" cy="9.300" rx="6" ry="9.300"/><rect x="-3" y="17.500" width="6.500" height="6"/><path d="M-5.500 23.500Q0 21 5.500 23.500L6.200 38Q0 42 -5.700 38Z"/><rect x="-5" y="39.500" width="10.500" height="8" rx="2"/><path d="M-6 47L7 47L7.800 58Q0.500 63 -6.800 58Z"/><path d="M-8 59L-1.300 60L-1.500 85L-2 108.500L-7 108.500L-8.200 85Z"/><path d="M0 61L8 60L8.600 86L8.200 112.500L2.200 112.500L1 86Z"/><path d="M-2 106.500L-1.500 110L-13 114L-14.500 112Z"/><path d="M8.200 109.500L8.600 113.500L-4 118L-5.500 115.500Z"/><path d="M-3.500 21.500L-5 29.500L-37 16.800L-39 13.500L-36 11.200Z"/><path d="M4.500 25L5.500 32.500L46 44L49 41.500L47 37.800Z"/></g><path d="M3 24.500L5 38L3 41ZM4 48L7 58L3 61ZM-3 62L-2 85L-2.800 107L-4.500 107L-3.800 85ZM6 62L8 86L7.500 112L5.500 112L6.500 86Z" fill="#a80000" opacity="0.550"/></g></svg>
<div style="left:934px;top:272px;width:10px;height:612px;background:#3f3f3f;border-radius:5px"></div>
<div style="left:79px;top:888px;width:851px;height:10px;background:#3f3f3f;border-radius:5px"></div>
<div style="left:950px;top:272px;width:1px;height:629px;background:#333"></div>
<div style="left:951px;top:272px;width:1px;height:629px;background:#6a6a6a"></div>
<div style="left:951px;top:271px;width:289px;height:159px;border:1px solid #6a6a6a;border-top-color:#5a5a5a"></div>
<div class="grp" style="left:952px;top:274px;width:82px;height:20px;"><div class="btn sel" style="left:-1px;width:41px;border-left:none"></div><div class="btn" style="left:40px;width:41px;border-left:1px solid #333;background:#707070"></div></div>
<span class="t" style="top:276.5px;font-size:11px;line-height:15px;color:#111;left:955px;letter-spacing:0.333px;">导航器</span>
<span class="t" style="top:276.5px;font-size:11px;line-height:15px;color:#d8d8d8;left:996px;letter-spacing:0.333px;">柱状图</span>
<div style="left:1009px;top:302px;width:173px;height:97px;background:#000;border:1px solid #bdbdbd"></div>
<svg style="left:0;top:0" width="1920" height="1040" viewBox="0 0 1920 1040"><g transform="translate(1094.5,343.5) scale(0.19)"><defs><linearGradient id="fg6" x1="0" y1="0" x2="0" y2="1"><stop offset="0" stop-color="#500000"/><stop offset="1" stop-color="#300000"/></linearGradient></defs><g fill="url(#fg6)"><path d="M-7 118L-1 118L0 167L-5 167Z"/><path d="M1 119L8 119L8.500 167L2 167Z"/><path d="M-4.500 166L8.500 166L7.500 193L-2.500 193Z"/><ellipse cx="2.500" cy="205" rx="5" ry="9"/></g><path d="M-34.600 170L0 188M4 190L45 210" stroke="#300000" stroke-width="3.200" stroke-linecap="round"/><g fill="#e00000"><ellipse cx="0" cy="9.300" rx="6" ry="9.300"/><rect x="-3" y="17.500" width="6.500" height="6"/><path d="M-5.500 23.500Q0 21 5.500 23.500L6.200 38Q0 42 -5.700 38Z"/><rect x="-5" y="39.500" width="10.500" height="8" rx="2"/><path d="M-6 47L7 47L7.800 58Q0.500 63 -6.800 58Z"/><path d="M-8 59L-1.300 60L-1.500 85L-2 108.500L-7 108.500L-8.200 85Z"/><path d="M0 61L8 60L8.600 86L8.200 112.500L2.200 112.500L1 86Z"/><path d="M-2 106.500L-1.500 110L-13 114L-14.500 112Z"/><path d="M8.200 109.500L8.600 113.500L-4 118L-5.500 115.500Z"/><path d="M-3.500 21.500L-5 29.500L-37 16.800L-39 13.500L-36 11.200Z"/><path d="M4.500 25L5.500 32.500L46 44L49 41.500L47 37.800Z"/></g><path d="M3 24.500L5 38L3 41ZM4 48L7 58L3 61ZM-3 62L-2 85L-2.800 107L-4.500 107L-3.800 85ZM6 62L8 86L7.500 112L5.500 112L6.500 86Z" fill="#a80000" opacity="0.550"/></g></svg>
<div class="fld" style="left:957px;top:404px;width:70px;height:20px;border-radius:3px 0 0 3px"></div>
<span class="t" style="top:406.0px;font-size:12px;line-height:16px;color:#bdbdbd;left:962px;letter-spacing:-0.590px;">64 %</span>
<svg style="left:1018px;top:409px;" width="6" height="11" viewBox="0 0 6 11"><path d="M0.5 4l2.5-3.5L5.5 4zM0.5 7l2.5 3.5L5.5 7z" fill="#a8a8a8"/></svg>
<div style="left:1027px;top:406px;width:182px;height:16px;background:#303030;border:1px solid #2a2a2a;border-left:none;border-radius:0 3px 3px 0"></div>
<div style="left:1027px;top:407px;width:36px;height:14px;background:#858585"></div>
<div style="left:1062px;top:407px;width:2px;height:14px;background:#f5a623"></div>
<div style="left:1118px;top:417px;width:1px;height:3px;background:#c78a1e"></div>
<svg style="left:1214px;top:404px;" width="20" height="20" viewBox="0 0 20 20"><circle cx="10" cy="10" r="9" fill="#7a7a7a" stroke="#3a3a3a" stroke-width="1"/><path d="M8.5 7l4 3-4 3z" fill="#eee"/></svg>
<div style="left:951px;top:433px;width:289px;height:467px;border:1px solid #6a6a6a;border-top-color:#3a3a3a"></div>
<div class="grp" style="left:954px;top:439px;width:151px;height:20px;"><div class="btn sel" style="left:-1px;width:30px;border-left:none"></div><div class="btn" style="left:29px;width:30px;border-left:1px solid #333;background:#707070"></div><div class="btn" style="left:59px;width:30px;border-left:1px solid #333;background:#707070"></div><div class="btn" style="left:89px;width:30px;border-left:1px solid #333;background:#707070"></div><div class="btn" style="left:119px;width:30px;border-left:1px solid #333;background:#707070"></div></div>
<span class="t" style="top:441.5px;font-size:11px;line-height:15px;color:#111;left:969px;transform:translateX(-50%);">历史</span>
<span class="t" style="top:441.5px;font-size:11px;line-height:15px;color:#d8d8d8;left:999px;transform:translateX(-50%);">信息</span>
<span class="t" style="top:441.5px;font-size:11px;line-height:15px;color:#d8d8d8;left:1029px;transform:translateX(-50%);">层</span>
<span class="t" style="top:441.5px;font-size:11px;line-height:15px;color:#d8d8d8;left:1059px;transform:translateX(-50%);">滤镜</span>
<span class="t" style="top:441.5px;font-size:11px;line-height:15px;color:#d8d8d8;left:1089px;transform:translateX(-50%);">立体</span>
<div style="left:958px;top:467px;width:272px;height:18px;background:#333"></div>
<span class="t" style="top:468.5px;font-size:11px;line-height:15px;color:#d8d8d8;left:960px;letter-spacing:0.000px;">历史</span>
<div style="left:959px;top:489px;width:269px;height:403px;border:1px solid #5c5c5c;border-top:none;background:#484848"></div>
<div style="left:959px;top:490px;width:94px;height:20px;background:#4a4a4a;border:1px solid #666;border-right-color:#333;border-bottom-color:#333"></div>
<span class="t" style="top:492.5px;font-size:11px;line-height:15px;color:#d0d0d0;left:963px;letter-spacing:0.000px;">名称</span>
<div style="left:1054px;top:490px;width:14px;height:20px;background:#4a4a4a;border:1px solid #666;border-right-color:#333;border-bottom-color:#333"></div>
<span class="t" style="top:492.0px;font-size:12px;line-height:16px;color:#d0d0d0;left:1058px;">R</span>
<div style="left:1069px;top:490px;width:51px;height:20px;background:#4a4a4a;border:1px solid #666;border-right-color:#333;border-bottom-color:#333"></div>
<span class="t" style="top:492.5px;font-size:11px;line-height:15px;color:#d0d0d0;left:1073px;letter-spacing:0.000px;">渲染时间</span>
<div style="left:1121px;top:490px;width:15px;height:20px;background:#4a4a4a;border:1px solid #666;border-right-color:#333;border-bottom-color:#333"></div>
<span class="t" style="top:492.0px;font-size:12px;line-height:16px;color:#d0d0d0;left:1125px;">F</span>
<div style="left:1137px;top:490px;width:57px;height:20px;background:#4a4a4a;border:1px solid #666;border-right-color:#333;border-bottom-color:#333"></div>
<span class="t" style="top:492.5px;font-size:11px;line-height:15px;color:#d0d0d0;left:1141px;letter-spacing:0.000px;">分辨率</span>
<div style="left:1195px;top:490px;width:32px;height:20px;background:#4a4a4a;border:1px solid #666;border-right-color:#333;border-bottom-color:#333"></div>
<div style="left:960px;top:510px;width:267px;height:20px;background:#525252"></div>
<div style="left:979px;top:511px;width:18px;height:18px;background:#000"></div>
<span class="t" style="top:512.0px;font-size:12px;line-height:16px;color:#d2d2d2;left:1000px;letter-spacing:-0.529px;">CS1.png</span>
<svg style="left:1058px;top:515px;" width="10" height="10" viewBox="0 0 10 10"><circle cx="5" cy="5" r="5" fill="#4ce890"/></svg>
<span class="t" style="top:512.0px;font-size:12px;line-height:16px;color:#d2d2d2;left:1073px;letter-spacing:-0.715px;">00:00:01</span>
<span class="t" style="top:512.0px;font-size:12px;line-height:16px;color:#d2d2d2;left:1128px;">0</span>
<span class="t" style="top:512.0px;font-size:12px;line-height:16px;color:#d2d2d2;left:1144px;letter-spacing:-0.590px;">1280x720</span>
<div style="left:960px;top:530px;width:267px;height:20px;background:#484848"></div>
<div style="left:979px;top:531px;width:18px;height:18px;background:#000"></div>
<span class="t" style="top:532.0px;font-size:12px;line-height:16px;color:#d2d2d2;left:1000px;letter-spacing:-0.529px;">CS2.png</span>
<svg style="left:1058px;top:535px;" width="10" height="10" viewBox="0 0 10 10"><circle cx="5" cy="5" r="5" fill="#4ce890"/></svg>
<span class="t" style="top:532.0px;font-size:12px;line-height:16px;color:#d2d2d2;left:1073px;letter-spacing:-0.715px;">00:00:01</span>
<span class="t" style="top:532.0px;font-size:12px;line-height:16px;color:#d2d2d2;left:1128px;">0</span>
<span class="t" style="top:532.0px;font-size:12px;line-height:16px;color:#d2d2d2;left:1144px;letter-spacing:-0.590px;">1280x720</span>
<div style="left:960px;top:550px;width:267px;height:20px;background:#6e6e6e"></div>
<div style="left:979px;top:551px;width:18px;height:18px;background:#000"></div>
<span class="t" style="top:552.0px;font-size:12px;line-height:16px;color:#bdbdbd;left:1000px;letter-spacing:-0.529px;">CS3.png</span>
<svg style="left:1058px;top:555px;" width="10" height="10" viewBox="0 0 10 10"><circle cx="5" cy="5" r="5" fill="#4ce890"/></svg>
<span class="t" style="top:552.0px;font-size:12px;line-height:16px;color:#bdbdbd;left:1073px;letter-spacing:-0.715px;">00:00:01</span>
<span class="t" style="top:552.0px;font-size:12px;line-height:16px;color:#bdbdbd;left:1128px;">0</span>
<span class="t" style="top:552.0px;font-size:12px;line-height:16px;color:#bdbdbd;left:1144px;letter-spacing:-0.590px;">1280x720</span>
<svg style="left:960px;top:510px;" width="20" height="60" viewBox="0 0 20 60"><path d="M11.5 0v50.5h6M11.5 10.5h6M11.5 30.5h6" stroke="#7a7a7a" stroke-width="1" fill="none"/></svg>
<div style="left:76px;top:900px;width:1164px;height:1px;background:#3a3a3a"></div>
<div style="left:76px;top:901px;width:1164px;height:1px;background:#6a6a6a"></div>
<div class="fld" style="left:78px;top:905px;width:70px;height:20px;"></div>
<span class="t" style="top:907.0px;font-size:12px;line-height:16px;color:#bdbdbd;left:84px;letter-spacing:-0.590px;">64 %</span>
<svg style="left:140px;top:910px;" width="6" height="11" viewBox="0 0 6 11"><path d="M0.5 4l2.5-3.5L5.5 4zM0.5 7l2.5 3.5L5.5 7z" fill="#a8a8a8"/></svg>
<svg style="left:153px;top:905px;" width="20" height="20" viewBox="0 0 20 20"><circle cx="10" cy="10" r="9" fill="#7a7a7a" stroke="#3a3a3a" stroke-width="1"/><path d="M8.5 7l4 3-4 3z" fill="#eee"/></svg>
<span class="t" style="top:907.0px;font-size:12px;line-height:16px;color:#c8c8c8;left:184px;letter-spacing:-0.590px;">00:00:01</span>
<div style="left:238px;top:907px;width:1px;height:16px;background:#666"></div>
<span class="t" style="top:907.0px;font-size:12px;line-height:16px;color:#c8c8c8;left:243px;letter-spacing:-0.586px;">尺寸: 1280x720, RGB (8 位), 2.84 MB</span>
<svg style="left:561px;top:904px;" width="50" height="50" viewBox="0 0 50 50"><circle cx="25" cy="25" r="24.1" fill="#fff" stroke="#1e82ff" stroke-width="1.9"/><circle cx="25" cy="25" r="22" fill="none" stroke="#1a1a1a" stroke-width="1.2"/><path d="M20.700 20.800Q25.200 18.600 29.800 20.800L29.600 25.500Q28.600 30.200 25.200 32.600Q21.700 30.200 20.900 25.500Z" fill="#0c0c0c"/><path d="M21.800 21.500Q18 18.300 13.300 18.200M15.800 18.200Q15.800 15 14.800 12.200M19.200 19.300Q19.700 16.500 19.300 14.200M22 21Q22.700 19.500 23 18.200M28.800 21.500Q32.600 18.300 37.300 18.200M34.800 18.200Q34.800 15 35.800 12.200M31.400 19.300Q30.900 16.500 31.300 14.200M28.600 21Q27.900 19.500 27.600 18.200" stroke="#0c0c0c" stroke-width="1.500" fill="none" stroke-linecap="round"/><text x="25.300" y="40.600" font-family="Liberation Serif,Noto Serif CJK SC,serif" font-size="6" font-weight="bold" fill="#111" text-anchor="middle">野鹿志</text></svg></body></html>
